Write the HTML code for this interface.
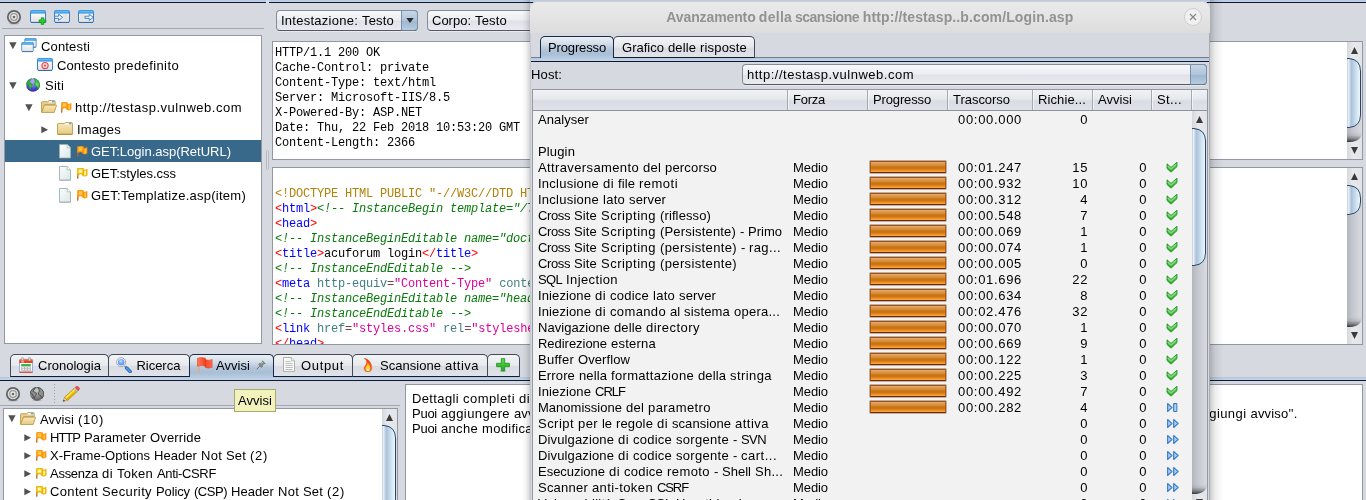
<!DOCTYPE html>
<html><head><meta charset="utf-8"><title>ZAP</title>
<style>
html,body{margin:0;padding:0;background:#d6d9df;}
body{width:1366px;height:500px;overflow:hidden;font-family:"Liberation Sans",sans-serif;}
#root{will-change:transform;position:relative;width:1366px;height:500px;overflow:hidden;background:#d6d9df;}
#root div,#root span,#root svg{position:absolute;box-sizing:border-box;}
#root svg{overflow:visible;}
.mono{font-family:"Liberation Mono",monospace;}

</style></head><body>
<svg width="0" height="0" style="position:absolute"><defs>
<linearGradient id="g-check" x1="0" y1="0" x2="0" y2="1"><stop offset="0" stop-color="#63cf5c"/><stop offset="1" stop-color="#2aa02a"/></linearGradient>
<symbol id="i-check" viewBox="0 0 12 11"><path d="M1 1.8L5 5.4L11 0.2V4.6L5 10.2L1 6.6Z" fill="#fff" stroke="#fff" stroke-width="1.6" stroke-linejoin="round" opacity=".8"/><path d="M1 1.8L5 5.4L11 0.2V4.6L5 10.2L1 6.6Z" fill="url(#g-check)" stroke="#23922a" stroke-width=".9" stroke-linejoin="round"/><path d="M2 4.2L5 7.0L10 2.6" fill="none" stroke="#8fe88a" stroke-width="1.3" opacity=".8"/></symbol>
<linearGradient id="g-blue" x1="0" y1="0" x2="1" y2="0"><stop offset="0" stop-color="#8fc0ee"/><stop offset="1" stop-color="#c6e0f8"/></linearGradient>
<symbol id="i-pp" viewBox="0 0 11 9"><path d="M0.6 0.5L5.0 4.5L0.6 8.5Z" fill="url(#g-blue)" stroke="#3b7cc6" stroke-width="1.05" stroke-linejoin="round"/><rect x="6.6" y="0.6" width="3.2" height="7.8" rx=".4" fill="url(#g-blue)" stroke="#3b7cc6" stroke-width="1.05"/></symbol>
<symbol id="i-ff" viewBox="0 0 12 9"><path d="M0.6 0.5L5.0 4.5L0.6 8.5Z" fill="url(#g-blue)" stroke="#3b7cc6" stroke-width="1.05" stroke-linejoin="round"/><path d="M6.6 0.5L11.2 4.5L6.6 8.5Z" fill="url(#g-blue)" stroke="#3b7cc6" stroke-width="1.05" stroke-linejoin="round"/></symbol>

<!-- gray target 16x16 (drawn 14 dia centred at 8,8) -->
<radialGradient id="g-tgt" cx=".5" cy=".4" r=".6"><stop offset="0" stop-color="#f4f4f4"/><stop offset="1" stop-color="#cfcfcf"/></radialGradient>
<symbol id="i-target" viewBox="0 0 16 16"><ellipse cx="8" cy="14.6" rx="5" ry="1" fill="rgba(0,0,0,.18)"/><circle cx="8" cy="8" r="6.2" fill="url(#g-tgt)" stroke="#626262" stroke-width="1.7"/><circle cx="8" cy="8" r="3.3" fill="none" stroke="#9a9a9a" stroke-width="1.3"/><circle cx="8" cy="8" r="1.3" fill="#6a6a6a"/></symbol>

<!-- window base 16x14 -->
<linearGradient id="g-wtop" x1="0" y1="0" x2="0" y2="1"><stop offset="0" stop-color="#6fd0fc"/><stop offset="1" stop-color="#3a9de9"/></linearGradient>
<linearGradient id="g-wbody" x1="0" y1="0" x2="0" y2="1"><stop offset="0" stop-color="#ffffff"/><stop offset="1" stop-color="#e2e2e2"/></linearGradient>
<symbol id="i-win" viewBox="0 0 16 14"><rect x=".5" y=".5" width="15" height="12" rx="1.4" fill="url(#g-wbody)" stroke="#3a7cc2"/><path d="M.5 3.2V1.9Q.5 .5 1.9 .5H14.1Q15.5 .5 15.5 1.9V3.2Z" fill="url(#g-wtop)" stroke="#3b8fdc" stroke-width=".6"/><path d="M1 12.4H15" stroke="#2f69ad" stroke-width=".9"/></symbol>
<symbol id="i-winadd" viewBox="0 0 17 16"><use href="#i-win" x="0" y="0" width="16" height="14"/><path d="M11.3 7.8H13.7V9.9H15.8V12.3H13.7V14.4H11.3V12.3H9.2V9.9H11.3Z" fill="#2fd02f" stroke="#0f8f1a" stroke-width=".8" stroke-linejoin="round"/></symbol>
<symbol id="i-winin" viewBox="0 0 16 14"><use href="#i-win" width="16" height="14"/><rect x="9" y="4" width="5" height="7.5" fill="#e4e4e4"/><path d="M0.6 6.2H4.6V4.2L8.6 7.3L4.6 10.4V8.4H0.6Z" fill="#e9f4fd" stroke="#3a7cc2" stroke-width=".9" stroke-linejoin="round"/></symbol>
<symbol id="i-winout" viewBox="0 0 16 14"><use href="#i-win" width="16" height="14"/><rect x="2" y="4" width="5" height="7.5" fill="#e4e4e4"/><path d="M7 6.2H11.2V4.2L15.4 7.3L11.2 10.4V8.4H7Z" fill="#e9f4fd" stroke="#3a7cc2" stroke-width=".9" stroke-linejoin="round"/></symbol>
<symbol id="i-ctxs" viewBox="0 0 16 15"><use href="#i-win" x="3" y="0" width="13" height="10.5"/><use href="#i-win" x="0" y="4" width="13" height="10.8"/></symbol>
<symbol id="i-ctx" viewBox="0 0 16 14"><use href="#i-win" width="16" height="14"/><circle cx="8" cy="7.6" r="3.1" fill="#fde3e3" stroke="#e8474a" stroke-width="1.2"/><circle cx="8" cy="7.6" r="1.1" fill="#e8474a"/></symbol>

<!-- globe -->
<radialGradient id="g-globe" cx=".48" cy=".22" r=".8"><stop offset="0" stop-color="#b3aef8"/><stop offset=".35" stop-color="#8f8af0"/><stop offset=".7" stop-color="#4a46cc"/><stop offset="1" stop-color="#2d2aa6"/></radialGradient>
<symbol id="i-globe" viewBox="0 0 14 14"><circle cx="7" cy="7" r="6.8" fill="url(#g-globe)"/><path d="M5.6 .5Q2.4 1.2 .8 4.2L.5 5.8L2.2 6.9L3.2 9.2L4.3 11.6L4.9 9.4L6.2 7.8L6.4 6.3L4.5 5.2L2.9 4.3Z" fill="#2fae2f" stroke="#1f8f22" stroke-width=".5" stroke-linejoin="round"/><path d="M7.7 .3Q11.4 .7 13.2 4.2Q14 7 13.2 9.2L12.1 11.3L11 8.9L8.7 7.6L8.2 5.6L9.5 4.2L8.9 2.2Z" fill="#3fbf45" stroke="#1f8f22" stroke-width=".5" stroke-linejoin="round"/><path d="M9.6 4.6L12.2 5.2L12.4 8.2L10.4 7.6Z" fill="#7be07f" opacity=".8"/><path d="M4.2 7.2L5.4 7.4L4.6 9.4Z" fill="#6fd873" opacity=".8"/></symbol>
<radialGradient id="g-globeg" cx=".48" cy=".22" r=".8"><stop offset="0" stop-color="#cdcdcd"/><stop offset=".4" stop-color="#a2a2a2"/><stop offset="1" stop-color="#5c5c5c"/></radialGradient>
<symbol id="i-globeg" viewBox="0 0 14 14"><ellipse cx="7" cy="13.7" rx="5" ry=".8" fill="rgba(0,0,0,.15)"/><circle cx="7" cy="7" r="6.5" fill="url(#g-globeg)" stroke="#5a5a5a" stroke-width=".6"/><path d="M5.6 .5Q2.4 1.2 .8 4.2L.5 5.8L2.2 6.9L3.2 9.2L4.3 11.6L4.9 9.4L6.2 7.8L6.4 6.3L4.5 5.2L2.9 4.3Z" fill="#8e8e8e" stroke="#444" stroke-width=".8" stroke-linejoin="round"/><path d="M7.7 .3Q11.4 .7 13.2 4.2Q14 7 13.2 9.2L12.1 11.3L11 8.9L8.7 7.6L8.2 5.6L9.5 4.2L8.9 2.2Z" fill="#909090" stroke="#444" stroke-width=".8" stroke-linejoin="round"/></symbol>

<!-- folders -->
<linearGradient id="g-fold" x1="0" y1="0" x2="0" y2="1"><stop offset="0" stop-color="#f7e9b8"/><stop offset="1" stop-color="#e6cb80"/></linearGradient>
<symbol id="i-folder" viewBox="0 0 16 13"><path d="M.5 12.2V2.2Q.5 1.5 1.2 1.5H7.2L8.6 .5H14.6Q15.5 .5 15.5 1.4V12.2Q15.5 12.6 15 12.6H1Q.5 12.6 .5 12.2Z" fill="url(#g-fold)" stroke="#c09c50" stroke-width=".9"/><path d="M9.2 1.0H14.8V2.6H7.6Z" fill="#fbfbfb"/><rect x="12" y="1.1" width="2.6" height="1.2" fill="#3aa5ee"/><path d="M1 12.2H15" stroke="#a98238" stroke-width=".8"/></symbol>
<symbol id="i-folderopen" viewBox="0 0 16 13"><path d="M.5 12.0V2.4Q.5 1.7 1.2 1.7H6.6L8.0 .6H13.4Q14.2 .6 14.2 1.4V4.6H3.6L.9 12.0Z" fill="#e6cf8f" stroke="#c09c50" stroke-width=".9"/><path d="M8.6 1.1H13.6V2.6H7.2Z" fill="#fbfbfb"/><rect x="11" y="1.1" width="2.4" height="1.2" fill="#3aa5ee"/><path d="M.7 12.5L3.4 5.2H15.6L13.2 12.5Z" fill="url(#g-fold)" stroke="#c09c50" stroke-width=".9" stroke-linejoin="round"/></symbol>

<!-- small flags 11x11 -->
<symbol id="i-flago" viewBox="0 0 11 11"><path d="M1.0 5.8L0.7 10.2" stroke="#b5651c" stroke-width="1.3" stroke-linecap="round"/><path d="M5.6 1.7Q7.8 3.0 10.1 1.3V7.3Q7.8 9.0 5.6 7.5Z" fill="#ff9a08" stroke="#f38f00" stroke-width=".5" stroke-linejoin="round"/><path d="M7.2 2.9Q8.2 3.0 9.1 2.6V6.9Q8.2 7.6 7.2 7.4Z" fill="#ffbf4a"/><path d="M0.3 0.7Q3.4 -0.5 6.7 0.7V6.5Q3.4 5.3 0.3 6.5Z" fill="#ff9d0a" stroke="#f38f00" stroke-width=".5" stroke-linejoin="round"/><path d="M1.7 1.5Q3.4 0.9 5.2 1.5V5.1Q3.4 4.5 1.7 5.1Z" fill="#ffc555"/></symbol>
<symbol id="i-flagy" viewBox="0 0 11 11"><path d="M1.0 5.8L0.7 10.2" stroke="#b5651c" stroke-width="1.3" stroke-linecap="round"/><path d="M5.6 1.7Q7.8 3.0 10.1 1.3V7.3Q7.8 9.0 5.6 7.5Z" fill="#f7c80a" stroke="#dba800" stroke-width=".7" stroke-linejoin="round"/><path d="M7.1 3.0Q8.2 3.1 9.0 2.7V6.8Q8.2 7.5 7.1 7.3Z" fill="#fff3a0"/><path d="M0.3 0.7Q3.4 -0.5 6.7 0.7V6.5Q3.4 5.3 0.3 6.5Z" fill="#f7c80a" stroke="#dba800" stroke-width=".7" stroke-linejoin="round"/><path d="M1.8 1.7Q3.4 1.1 5.1 1.7V4.9Q3.4 4.3 1.8 4.9Z" fill="#fff6b0"/></symbol>
<!-- big red flag 16x16 -->
<linearGradient id="g-red" x1="0" y1="0" x2="1" y2="0"><stop offset="0" stop-color="#ff7a58"/><stop offset=".5" stop-color="#f2482a"/><stop offset="1" stop-color="#ff6a48"/></linearGradient>
<symbol id="i-flagr" viewBox="0 0 16 16"><path d="M1.3 1V15.4" stroke="#d59a5c" stroke-width="1.8"/><path d="M1.0 9.5V15.4" stroke="#fff" stroke-width=".6" opacity=".7"/><path d="M.5 1.2Q4.5 -.4 8.4 1.2V2.6Q11.5 4.2 15.2 2.4V10.2Q11.5 12.0 8.4 10.4V9.2Q4.5 7.8 .5 9.2Z" fill="url(#g-red)" stroke="#e8401f" stroke-width=".5"/><path d="M8.4 2.2V9.8" stroke="#d93a1a" stroke-width=".8"/></symbol>

<!-- documents -->
<linearGradient id="g-doc" x1="0" y1="0" x2="1" y2="1"><stop offset="0" stop-color="#fbfdfd"/><stop offset="1" stop-color="#dbe7e7"/></linearGradient>
<symbol id="i-doc" viewBox="0 0 12 15"><ellipse cx="6" cy="14.4" rx="6" ry=".7" fill="rgba(0,0,0,.22)"/><path d="M.5 .5H8.2L11.5 3.8V14.0H.5Z" fill="url(#g-doc)" stroke="#9db0b0" stroke-width=".9" stroke-linejoin="round"/><path d="M8.2 .5V3.8H11.5" fill="#fff" stroke="#9db0b0" stroke-width=".7"/></symbol>
<symbol id="i-doclines" viewBox="0 0 12 15"><path d="M.5 .5H8.2L11.5 3.8V14.4H.5Z" fill="#fafafa" stroke="#a8a8a8" stroke-width=".9" stroke-linejoin="round"/><path d="M8.2 .5V3.8H11.5" fill="#eee" stroke="#a8a8a8" stroke-width=".7"/><path d="M2.4 4.5H7.4M2.4 6.5H9.6M2.4 8.5H9.6M2.4 10.5H9.6M2.4 12.5H9.6" stroke="#b5b5b5" stroke-width=".9"/></symbol>

<!-- calendar 14x16 -->
<linearGradient id="g-calr" x1="0" y1="0" x2="0" y2="1"><stop offset="0" stop-color="#f36a4c"/><stop offset="1" stop-color="#e23518"/></linearGradient>
<symbol id="i-cal" viewBox="0 0 14 16"><rect x=".5" y="2.3" width="13" height="13.2" rx="1" fill="#fff" stroke="#7eaee0" stroke-width=".9"/><path d="M.3 6.0V3.4Q.3 2.2 1.5 2.2H12.5Q13.7 2.2 13.7 3.4V6.0Z" fill="url(#g-calr)"/><rect x=".3" y="14.6" width="13.4" height="1.2" rx=".5" fill="#e23a1c"/><rect x="2.2" y="7.0" width="9.6" height="2.1" fill="#3db63c"/><rect x="2.2" y="9.3" width="9.6" height="4.6" fill="#a9b4c6"/><path d="M3.2 10.8H5.0M6.1 10.8H7.9M9.0 10.8H10.8M3.2 12.8H5.0M6.1 12.8H7.9M9.0 12.8H10.8" stroke="#fff" stroke-width="1"/><rect x="2.6" y=".3" width="1.8" height="3.6" rx=".9" fill="#d8d8d8" stroke="#8e8e8e" stroke-width=".5"/><rect x="9.6" y=".3" width="1.8" height="3.6" rx=".9" fill="#d8d8d8" stroke="#8e8e8e" stroke-width=".5"/><rect x="2.4" y="4.4" width="2.4" height=".9" fill="#fff"/></symbol>

<!-- magnifier 16x16 -->
<radialGradient id="g-lens" cx=".45" cy=".35" r=".7"><stop offset="0" stop-color="#c6defd"/><stop offset=".5" stop-color="#6ea8f8"/><stop offset="1" stop-color="#4d8df0"/></radialGradient>
<symbol id="i-mag" viewBox="0 0 16 16"><path d="M8.6 9.0L10.2 10.6" stroke="#8a8a8a" stroke-width="1.4"/><path d="M10.6 11.0L14.2 14.6" stroke="#1f5eaa" stroke-width="3.4" stroke-linecap="round"/><path d="M10.6 11.0L14.2 14.6" stroke="#4f97e2" stroke-width="2" stroke-linecap="round"/><circle cx="5.2" cy="5.2" r="4.5" fill="#fff" stroke="#9c9c9c" stroke-width=".9"/><circle cx="5.2" cy="5.2" r="3.3" fill="url(#g-lens)"/></symbol>

<!-- pin -->
<symbol id="i-pin" viewBox="0 0 10 10"><path d="M.6 9.4L4.2 5.8" stroke="#6a6a6a" stroke-width=".9"/><path d="M2.6 4.4L5.6 7.4L6.6 6.4L6.2 5.4L8.2 3.4L9.2 3.6L6.4 .8L6.6 1.8L4.6 3.8L3.6 3.4Z" fill="#8d8d8d" stroke="#5a5a5a" stroke-width=".6" stroke-linejoin="round"/><path d="M5.2 3.8L7.0 2.0" stroke="#d0d0d0" stroke-width=".8"/></symbol>

<!-- flame 12x14 -->
<linearGradient id="g-fl" x1="0" y1="0" x2="0" y2="1"><stop offset="0" stop-color="#e63a10"/><stop offset=".5" stop-color="#f4561a"/><stop offset="1" stop-color="#f86a1e"/></linearGradient>
<symbol id="i-flame" viewBox="0 0 12 14"><path d="M1.9 0.3Q6.5 0.8 8.6 5Q10.4 8.8 9.6 11.4Q8.6 13.9 6 13.9Q3 13.9 2.2 11.4Q1.6 9 3.6 7.2Q5.6 5 4.4 2.6Q3.6 1 1.9 0.3Z" fill="url(#g-fl)" stroke="#ef4a18" stroke-width=".5"/><path d="M5.7 4.6Q8.6 8.6 8.3 10.9Q7.7 13.1 6 13.1Q4.1 13.1 3.4 11Q3.0 9.2 4.8 7.6Q5.9 6.4 5.7 4.6Z" fill="#ffc21a"/><path d="M5.9 7.8Q7.6 10 7.4 11.2Q7.0 12.7 6 12.7Q4.8 12.7 4.4 11.2Q4.2 10 5.9 7.8Z" fill="#ffe14a"/><ellipse cx="6" cy="12" rx="1.5" ry=".9" fill="#fffbe6"/></symbol>

<!-- plus 14x14 -->
<linearGradient id="g-plus" x1="0" y1="0" x2="0" y2="1"><stop offset="0" stop-color="#5fdc4a"/><stop offset="1" stop-color="#1fa81f"/></linearGradient>
<symbol id="i-plus" viewBox="0 0 14 14"><ellipse cx="7" cy="13.3" rx="3.2" ry=".7" fill="rgba(0,0,0,.25)"/><path d="M5.3 .6H8.7V5.3H13.4V8.7H8.7V12.8H5.3V8.7H.6V5.3H5.3Z" fill="url(#g-plus)" stroke="#1c8f1c" stroke-width=".8" stroke-linejoin="round"/></symbol>

<!-- pencil 18x16 -->
<symbol id="i-pencil" viewBox="0 0 18 16"><path d="M1 15.5L2.48 11.17L5.44 14.43Z" fill="#f3cfa4" stroke="#9a7442" stroke-width=".4"/><path d="M1 15.5L1.7 13.5L3.0 14.9Z" fill="#2a2a2a"/><path d="M2.48 11.17L12.12 2.46L15.08 5.72L5.44 14.43Z" fill="#f6c40c" stroke="#9a7800" stroke-width=".6" stroke-linejoin="round"/><path d="M3.6 11.8L13.0 3.3" stroke="#ffe873" stroke-width="1.1"/><path d="M4.9 13.5L14.4 5.0" stroke="#dba400" stroke-width="1.0"/><path d="M12.12 2.46L13.23 1.46L16.19 4.72L15.08 5.72Z" fill="#d8d8d8" stroke="#8a8a8a" stroke-width=".4"/><path d="M13.23 1.46L14.5 0.4Q15.3 -0.1 16.0 0.6L17.2 1.9Q17.8 2.7 17.1 3.5L16.19 4.72Z" fill="#ee4a4a" stroke="#b63434" stroke-width=".5"/></symbol>

<symbol id="i-dn" viewBox="0 0 8 8"><path d="M.2 .3H7.6L3.9 7.3Z" fill="#525252"/></symbol>
<symbol id="i-rt" viewBox="0 0 8 8"><path d="M.3 .2V7.2L7.1 3.7Z" fill="#525252"/></symbol>
</defs></svg>

<div id="root">
<div style="left:0px;top:0px;width:266px;height:2px;background:linear-gradient(#b3c7de,#c3d5ea);"></div>
<div style="left:0px;top:2px;width:266px;height:1px;background:#0f1830;"></div>
<div style="left:269px;top:0px;width:1097px;height:2px;background:linear-gradient(#b3c7de,#c3d5ea);"></div>
<div style="left:269px;top:2px;width:1097px;height:1px;background:#0f1830;"></div>
<div style="left:2px;top:28px;width:262px;height:1px;background:#a3a7b0;"></div>
<div style="left:4px;top:35px;width:258px;height:309px;background:#fff;border:1px solid #9297a1;"></div>
<div style="left:5px;top:140px;width:256px;height:22px;background:#39698a;"></div>
<div style="left:266px;top:150px;width:3px;height:20px;border:1px solid #b4b8c0;border-radius:2px;background:#dfe1e6;"></div>
<div style="left:272px;top:41px;width:1091px;height:119px;background:#fff;border:1px solid #9297a1;"></div>
<div style="left:272px;top:167px;width:1091px;height:178px;background:#fff;border:1px solid #9297a1;"></div>
<div style="left:0px;top:377px;width:1366px;height:3px;background:linear-gradient(#b3c7de,#c3d5ea);"></div>
<div style="left:0px;top:380px;width:1366px;height:1px;background:#0f1830;"></div>
<div style="left:0px;top:405px;width:400px;height:1px;background:#a3a7b0;"></div>
<div style="left:3px;top:408px;width:395px;height:100px;background:#fff;border:1px solid #9297a1;"></div>
<div style="left:405px;top:384px;width:958px;height:130px;background:#fff;border:1px solid #9297a1;"></div>
<span style="left:41.00px;letter-spacing:0.164px;top:38.50px;font-size:13px;color:#000;line-height:16px;white-space:pre;">Contesti</span>
<span style="left:57.00px;letter-spacing:0.121px;top:57.50px;font-size:13px;color:#000;line-height:16px;white-space:pre;">Contesto</span><span style="left:114.00px;letter-spacing:0.390px;top:57.50px;font-size:13px;color:#000;line-height:16px;white-space:pre;">predefinito</span>
<span style="left:45.00px;letter-spacing:0.235px;top:77.50px;font-size:13px;color:#000;line-height:16px;white-space:pre;">Siti</span>
<span style="left:75.00px;letter-spacing:0.503px;top:99.50px;font-size:13px;color:#000;line-height:16px;white-space:pre;">http://testasp.vulnweb.com</span>
<span style="left:77.00px;letter-spacing:0.228px;top:121.50px;font-size:13px;color:#000;line-height:16px;white-space:pre;">Images</span>
<span style="left:91.00px;letter-spacing:-0.008px;top:143.50px;font-size:13px;color:#fff;line-height:16px;white-space:pre;">GET:Login.asp(RetURL)</span>
<span style="left:91.00px;letter-spacing:-0.017px;top:165.50px;font-size:13px;color:#000;line-height:16px;white-space:pre;">GET:styles.css</span>
<span style="left:91.00px;letter-spacing:0.257px;top:187.50px;font-size:13px;color:#000;line-height:16px;white-space:pre;">GET:Templatize.asp(item)</span>
<div style="left:276px;top:10px;width:142px;height:21px;border:1px solid #868b95;border-bottom-color:#535862;border-radius:4px;background:linear-gradient(#f7f8fa 0%,#eceef2 45%,#dfe2e8 55%,#e9ebf0 100%);box-shadow:0 1px 0 rgba(255,255,255,.45);"></div>
<div style="left:401px;top:10px;width:17px;height:21px;border:1px solid #7d8fa8;border-bottom-color:#66788f;border-radius:0 4px 4px 0;background:linear-gradient(#c9d7e7 0%,#afc3da 50%,#9fb7d2 55%,#b9cbdf 100%);"></div>
<svg style="left:406px;top:18px" width="8" height="5" viewBox="0 0 8 5"><path d="M.3 0H7.7L4 5Z" fill="#2a2a2a"/></svg>
<span style="left:281.00px;letter-spacing:0.253px;top:12.50px;font-size:13px;color:#000;line-height:16px;white-space:pre;">Intestazione:</span><span style="left:362.00px;letter-spacing:0.186px;top:12.50px;font-size:13px;color:#000;line-height:16px;white-space:pre;">Testo</span>
<div style="left:427px;top:10px;width:160px;height:21px;border:1px solid #868b95;border-bottom-color:#535862;border-radius:4px;background:linear-gradient(#f7f8fa 0%,#eceef2 45%,#dfe2e8 55%,#e9ebf0 100%);box-shadow:0 1px 0 rgba(255,255,255,.45);"></div>
<span style="left:432.00px;letter-spacing:-0.003px;top:12.50px;font-size:13px;color:#000;line-height:16px;white-space:pre;">Corpo:</span><span style="left:475.00px;letter-spacing:0.186px;top:12.50px;font-size:13px;color:#000;line-height:16px;white-space:pre;">Testo</span>
<div class="mono" style="left:275px;top:46.0px;font-size:12px;letter-spacing:-0.2px;line-height:15px;white-space:pre;"><span style="position:static;color:#000;">HTTP/1.1 200 OK</span></div>
<div class="mono" style="left:275px;top:61.0px;font-size:12px;letter-spacing:-0.2px;line-height:15px;white-space:pre;"><span style="position:static;color:#000;">Cache-Control: private</span></div>
<div class="mono" style="left:275px;top:76.0px;font-size:12px;letter-spacing:-0.2px;line-height:15px;white-space:pre;"><span style="position:static;color:#000;">Content-Type: text/html</span></div>
<div class="mono" style="left:275px;top:91.0px;font-size:12px;letter-spacing:-0.2px;line-height:15px;white-space:pre;"><span style="position:static;color:#000;">Server: Microsoft-IIS/8.5</span></div>
<div class="mono" style="left:275px;top:106.0px;font-size:12px;letter-spacing:-0.2px;line-height:15px;white-space:pre;"><span style="position:static;color:#000;">X-Powered-By: ASP.NET</span></div>
<div class="mono" style="left:275px;top:121.0px;font-size:12px;letter-spacing:-0.2px;line-height:15px;white-space:pre;"><span style="position:static;color:#000;">Date: Thu, 22 Feb 2018 10:53:20 GMT</span></div>
<div class="mono" style="left:275px;top:136.0px;font-size:12px;letter-spacing:-0.2px;line-height:15px;white-space:pre;"><span style="position:static;color:#000;">Content-Length: 2366</span></div>
<div style="left:273px;top:168px;width:1073px;height:176px;overflow:hidden;">
<div class="mono" style="left:2px;top:19.0px;font-size:12px;letter-spacing:-0.2px;line-height:15px;white-space:pre;"><span style="position:static;color:#b08208;">&lt;!DOCTYPE HTML PUBLIC &quot;-//W3C//DTD HTML 4.01 Transitional//EN&quot;&gt;</span></div>
<div class="mono" style="left:2px;top:34.0px;font-size:12px;letter-spacing:-0.2px;line-height:15px;white-space:pre;"><span style="position:static;color:#f00;">&lt;</span><span style="position:static;color:#00f;">html</span><span style="position:static;color:#f00;">&gt;</span><span style="position:static;color:#087a0c;font-style:italic;">&lt;!-- InstanceBegin template=&quot;/Templates/MainTemplate.dwt.asp&quot; --&gt;</span></div>
<div class="mono" style="left:2px;top:49.0px;font-size:12px;letter-spacing:-0.2px;line-height:15px;white-space:pre;"><span style="position:static;color:#f00;">&lt;</span><span style="position:static;color:#00f;">head</span><span style="position:static;color:#f00;">&gt;</span></div>
<div class="mono" style="left:2px;top:64.0px;font-size:12px;letter-spacing:-0.2px;line-height:15px;white-space:pre;"><span style="position:static;color:#087a0c;font-style:italic;">&lt;!-- InstanceBeginEditable name=&quot;doctitle&quot; --&gt;</span></div>
<div class="mono" style="left:2px;top:79.0px;font-size:12px;letter-spacing:-0.2px;line-height:15px;white-space:pre;"><span style="position:static;color:#f00;">&lt;</span><span style="position:static;color:#00f;">title</span><span style="position:static;color:#f00;">&gt;</span><span style="position:static;color:#000;">acuforum login</span><span style="position:static;color:#f00;">&lt;/</span><span style="position:static;color:#00f;">title</span><span style="position:static;color:#f00;">&gt;</span></div>
<div class="mono" style="left:2px;top:94.0px;font-size:12px;letter-spacing:-0.2px;line-height:15px;white-space:pre;"><span style="position:static;color:#087a0c;font-style:italic;">&lt;!-- InstanceEndEditable --&gt;</span></div>
<div class="mono" style="left:2px;top:109.0px;font-size:12px;letter-spacing:-0.2px;line-height:15px;white-space:pre;"><span style="position:static;color:#f00;">&lt;</span><span style="position:static;color:#00f;">meta</span><span style="position:static;color:#000;"> </span><span style="position:static;color:#3f7f7f;">http-equiv</span><span style="position:static;color:#804040;">=</span><span style="position:static;color:#dc009c;">&quot;Content-Type&quot;</span><span style="position:static;color:#000;"> </span><span style="position:static;color:#3f7f7f;">content</span><span style="position:static;color:#804040;">=</span><span style="position:static;color:#dc009c;">&quot;text/html; charset=iso-8859-1&quot;</span><span style="position:static;color:#f00;">&gt;</span></div>
<div class="mono" style="left:2px;top:124.0px;font-size:12px;letter-spacing:-0.2px;line-height:15px;white-space:pre;"><span style="position:static;color:#087a0c;font-style:italic;">&lt;!-- InstanceBeginEditable name=&quot;head&quot; --&gt;</span></div>
<div class="mono" style="left:2px;top:139.0px;font-size:12px;letter-spacing:-0.2px;line-height:15px;white-space:pre;"><span style="position:static;color:#087a0c;font-style:italic;">&lt;!-- InstanceEndEditable --&gt;</span></div>
<div class="mono" style="left:2px;top:154.0px;font-size:12px;letter-spacing:-0.2px;line-height:15px;white-space:pre;"><span style="position:static;color:#f00;">&lt;</span><span style="position:static;color:#00f;">link</span><span style="position:static;color:#000;"> </span><span style="position:static;color:#3f7f7f;">href</span><span style="position:static;color:#804040;">=</span><span style="position:static;color:#dc009c;">&quot;styles.css&quot;</span><span style="position:static;color:#000;"> </span><span style="position:static;color:#3f7f7f;">rel</span><span style="position:static;color:#804040;">=</span><span style="position:static;color:#dc009c;">&quot;stylesheet&quot;</span><span style="position:static;color:#000;"> </span><span style="position:static;color:#3f7f7f;">type</span><span style="position:static;color:#804040;">=</span><span style="position:static;color:#dc009c;">&quot;text/css&quot;</span><span style="position:static;color:#f00;">&gt;</span></div>
<div class="mono" style="left:2px;top:169.0px;font-size:12px;letter-spacing:-0.2px;line-height:15px;white-space:pre;"><span style="position:static;color:#f00;">&lt;/</span><span style="position:static;color:#00f;">head</span><span style="position:static;color:#f00;">&gt;</span></div>
</div>
<div style="left:10px;top:354px;width:99px;height:23px;border:1px solid #434957;border-bottom:1px solid #151b2d;border-radius:5px 5px 0 0;background:linear-gradient(#f3f4f6 0%,#e6e8ec 50%,#d9dce3 55%,#e0e3e8 100%);"></div>
<span style="left:38.00px;letter-spacing:0.013px;top:357.50px;font-size:13px;color:#000;line-height:16px;white-space:pre;">Cronologia</span>
<div style="left:108px;top:354px;width:82px;height:23px;border:1px solid #434957;border-bottom:1px solid #151b2d;border-radius:5px 5px 0 0;background:linear-gradient(#f3f4f6 0%,#e6e8ec 50%,#d9dce3 55%,#e0e3e8 100%);"></div>
<span style="left:136.40px;letter-spacing:-0.009px;top:357.50px;font-size:13px;color:#000;line-height:16px;white-space:pre;">Ricerca</span>
<div style="left:273px;top:354px;width:80px;height:23px;border:1px solid #434957;border-bottom:1px solid #151b2d;border-radius:5px 5px 0 0;background:linear-gradient(#f3f4f6 0%,#e6e8ec 50%,#d9dce3 55%,#e0e3e8 100%);"></div>
<span style="left:301.00px;letter-spacing:0.662px;top:357.50px;font-size:13px;color:#000;line-height:16px;white-space:pre;">Output</span>
<div style="left:352px;top:354px;width:136px;height:23px;border:1px solid #434957;border-bottom:1px solid #151b2d;border-radius:5px 5px 0 0;background:linear-gradient(#f3f4f6 0%,#e6e8ec 50%,#d9dce3 55%,#e0e3e8 100%);"></div>
<span style="left:380.00px;letter-spacing:0.032px;top:357.50px;font-size:13px;color:#000;line-height:16px;white-space:pre;">Scansione</span><span style="left:445.00px;letter-spacing:0.488px;top:357.50px;font-size:13px;color:#000;line-height:16px;white-space:pre;">attiva</span>
<div style="left:487px;top:354px;width:33px;height:23px;border:1px solid #434957;border-bottom:1px solid #151b2d;border-radius:5px 5px 0 0;background:linear-gradient(#f3f4f6 0%,#e6e8ec 50%,#d9dce3 55%,#e0e3e8 100%);"></div>
<div style="left:189px;top:354px;width:85px;height:23px;border:1px solid #1b2a44;border-bottom:none;border-radius:5px 5px 0 0;background:linear-gradient(#e9eef4 0%,#d5dfea 30%,#b2c5da 58%,#a9bdd4 80%,#b6cae0 100%);"></div>
<div style="left:190px;top:377px;width:83px;height:2px;background:linear-gradient(#b6cae0,#bed2e8);"></div>
<span style="left:216.00px;letter-spacing:0.048px;top:357.50px;font-size:13px;color:#000;line-height:16px;white-space:pre;">Avvisi</span>
<div style="left:234px;top:389px;width:42px;height:23px;background:#f2f2bd;border:1px solid #a8a870;"></div>
<span style="left:238.00px;letter-spacing:0.048px;top:392.50px;font-size:13px;color:#000;line-height:16px;white-space:pre;">Avvisi</span>
<span style="left:40.00px;letter-spacing:0.048px;top:411.50px;font-size:13px;color:#000;line-height:16px;white-space:pre;">Avvisi</span><span style="left:78.00px;letter-spacing:0.720px;top:411.50px;font-size:13px;color:#000;line-height:16px;white-space:pre;">(10)</span>
<span style="left:50.00px;letter-spacing:-0.985px;top:429.50px;font-size:13px;color:#000;line-height:16px;white-space:pre;">HTTP</span><span style="left:84.00px;letter-spacing:0.146px;top:429.50px;font-size:13px;color:#000;line-height:16px;white-space:pre;">Parameter</span><span style="left:150.00px;letter-spacing:0.144px;top:429.50px;font-size:13px;color:#000;line-height:16px;white-space:pre;">Override</span>
<span style="left:50.00px;letter-spacing:0.021px;top:447.50px;font-size:13px;color:#000;line-height:16px;white-space:pre;">X-Frame-Options</span><span style="left:154.00px;letter-spacing:0.060px;top:447.50px;font-size:13px;color:#000;line-height:16px;white-space:pre;">Header</span><span style="left:201.00px;letter-spacing:0.257px;top:447.50px;font-size:13px;color:#000;line-height:16px;white-space:pre;">Not</span><span style="left:226.00px;letter-spacing:0.162px;top:447.50px;font-size:13px;color:#000;line-height:16px;white-space:pre;">Set</span><span style="left:250.00px;letter-spacing:0.704px;top:447.50px;font-size:13px;color:#000;line-height:16px;white-space:pre;">(2)</span>
<span style="left:50.00px;letter-spacing:-0.266px;top:465.50px;font-size:13px;color:#000;line-height:16px;white-space:pre;">Assenza</span><span style="left:102.00px;letter-spacing:0.441px;top:465.50px;font-size:13px;color:#000;line-height:16px;white-space:pre;">di</span><span style="left:117.00px;letter-spacing:0.262px;top:465.50px;font-size:13px;color:#000;line-height:16px;white-space:pre;">Token</span><span style="left:157.00px;letter-spacing:-0.346px;top:465.50px;font-size:13px;color:#000;line-height:16px;white-space:pre;">Anti-CSRF</span>
<span style="left:50.00px;letter-spacing:0.353px;top:483.50px;font-size:13px;color:#000;line-height:16px;white-space:pre;">Content</span><span style="left:102.00px;letter-spacing:0.380px;top:483.50px;font-size:13px;color:#000;line-height:16px;white-space:pre;">Security</span><span style="left:156.00px;letter-spacing:-0.113px;top:483.50px;font-size:13px;color:#000;line-height:16px;white-space:pre;">Policy</span><span style="left:194.00px;letter-spacing:-0.478px;top:483.50px;font-size:13px;color:#000;line-height:16px;white-space:pre;">(CSP)</span><span style="left:231.00px;letter-spacing:0.060px;top:483.50px;font-size:13px;color:#000;line-height:16px;white-space:pre;">Header</span><span style="left:278.00px;letter-spacing:0.257px;top:483.50px;font-size:13px;color:#000;line-height:16px;white-space:pre;">Not</span><span style="left:303.00px;letter-spacing:0.162px;top:483.50px;font-size:13px;color:#000;line-height:16px;white-space:pre;">Set</span><span style="left:327.00px;letter-spacing:0.704px;top:483.50px;font-size:13px;color:#000;line-height:16px;white-space:pre;">(2)</span>
<span style="left:412.00px;letter-spacing:0.365px;top:390.50px;font-size:13px;color:#000;line-height:16px;white-space:pre;">Dettagli</span><span style="left:463.00px;letter-spacing:0.449px;top:390.50px;font-size:13px;color:#000;line-height:16px;white-space:pre;">completi</span><span style="left:519.00px;letter-spacing:0.441px;top:390.50px;font-size:13px;color:#000;line-height:16px;white-space:pre;">di</span><span style="left:534.00px;letter-spacing:0.355px;top:390.50px;font-size:13px;color:#000;line-height:16px;white-space:pre;">ogni</span><span style="left:564.00px;letter-spacing:0.025px;top:390.50px;font-size:13px;color:#000;line-height:16px;white-space:pre;">avviso</span><span style="left:605.00px;letter-spacing:0.021px;top:390.50px;font-size:13px;color:#000;line-height:16px;white-space:pre;">selezionato</span><span style="left:675.00px;letter-spacing:0.146px;top:390.50px;font-size:13px;color:#000;line-height:16px;white-space:pre;">saranno</span><span style="left:727.00px;letter-spacing:0.471px;top:390.50px;font-size:13px;color:#000;line-height:16px;white-space:pre;">mostrati</span><span style="left:781.00px;letter-spacing:0.510px;top:390.50px;font-size:13px;color:#000;line-height:16px;white-space:pre;">qui.</span>
<span style="left:412.00px;letter-spacing:-0.255px;top:405.50px;font-size:13px;color:#000;line-height:16px;white-space:pre;">Puoi</span><span style="left:441.00px;letter-spacing:0.394px;top:405.50px;font-size:13px;color:#000;line-height:16px;white-space:pre;">aggiungere</span><span style="left:514.00px;letter-spacing:0.082px;top:405.50px;font-size:13px;color:#000;line-height:16px;white-space:pre;">avvisi</span><span style="left:551.00px;letter-spacing:0.476px;top:405.50px;font-size:13px;color:#000;line-height:16px;white-space:pre;">manualmente</span><span style="left:639.00px;letter-spacing:0.347px;top:405.50px;font-size:13px;color:#000;line-height:16px;white-space:pre;">con</span><span style="left:665.00px;letter-spacing:0.770px;top:405.50px;font-size:13px;color:#000;line-height:16px;white-space:pre;">un</span><span style="left:685.00px;letter-spacing:0.345px;top:405.50px;font-size:13px;color:#000;line-height:16px;white-space:pre;">click</span><span style="left:716.00px;letter-spacing:0.312px;top:405.50px;font-size:13px;color:#000;line-height:16px;white-space:pre;">destro</span>
<span style="left:1192.50px;letter-spacing:0.425px;top:405.50px;font-size:13px;color:#000;line-height:16px;white-space:pre;">Aggiungi</span><span style="left:1250.50px;letter-spacing:0.175px;top:405.50px;font-size:13px;color:#000;line-height:16px;white-space:pre;">avviso&#x27;&#x27;.</span>
<span style="left:412.00px;letter-spacing:-0.255px;top:420.50px;font-size:13px;color:#000;line-height:16px;white-space:pre;">Puoi</span><span style="left:441.00px;letter-spacing:0.316px;top:420.50px;font-size:13px;color:#000;line-height:16px;white-space:pre;">anche</span><span style="left:482.00px;letter-spacing:0.303px;top:420.50px;font-size:13px;color:#000;line-height:16px;white-space:pre;">modificare</span><span style="left:549.00px;letter-spacing:0.331px;top:420.50px;font-size:13px;color:#000;line-height:16px;white-space:pre;">gli</span><span style="left:567.00px;letter-spacing:0.082px;top:420.50px;font-size:13px;color:#000;line-height:16px;white-space:pre;">avvisi</span><span style="left:604.00px;letter-spacing:0.257px;top:420.50px;font-size:13px;color:#000;line-height:16px;white-space:pre;">esistenti</span><span style="left:658.00px;letter-spacing:0.347px;top:420.50px;font-size:13px;color:#000;line-height:16px;white-space:pre;">con</span><span style="left:684.00px;letter-spacing:0.770px;top:420.50px;font-size:13px;color:#000;line-height:16px;white-space:pre;">un</span><span style="left:704.00px;letter-spacing:0.327px;top:420.50px;font-size:13px;color:#000;line-height:16px;white-space:pre;">doppio</span><span style="left:749.00px;letter-spacing:0.352px;top:420.50px;font-size:13px;color:#000;line-height:16px;white-space:pre;">click.</span>
<div style="left:1347px;top:42px;width:15px;height:117px;background:linear-gradient(90deg,#b3b6be 0%,#c3c6cd 35%,#d9dbe1 100%);"></div>
<div style="left:1347px;top:42px;width:15px;height:29px;background:linear-gradient(90deg,#d6d8dd,#e8e9ec 40%,#e2e4e8);"></div>
<svg style="left:1351px;top:47px" width="7" height="7" viewBox="0 0 7 7"><path d="M3.5 0L7 7H0Z" fill="#3a3a3a"/></svg>
<svg style="left:1347px;top:132px" width="15" height="10" viewBox="0 0 15 10"><defs><linearGradient id="capt1347_42" x1="0" y1="0" x2="1" y2="0"><stop offset="0" stop-color="#b3b6be"/><stop offset=".35" stop-color="#c3c6cd"/><stop offset="1" stop-color="#d9dbe1"/></linearGradient><linearGradient id="cap1347_42" x1="0" y1="0" x2="0" y2="1"><stop offset="0" stop-color="#000" stop-opacity="0"/><stop offset=".35" stop-color="#000" stop-opacity=".08"/><stop offset=".7" stop-color="#000" stop-opacity=".35"/><stop offset="1" stop-color="#000" stop-opacity=".72"/></linearGradient></defs><rect width="15" height="10" fill="#e4e5e9"/><path d="M0 0H15Q15 9 3 10H0Z" fill="url(#capt1347_42)"/><path d="M0 0H15Q15 9 3 10H0Z" fill="url(#cap1347_42)"/></svg>
<div style="left:1347px;top:142px;width:15px;height:17px;background:linear-gradient(90deg,#d6d8dd,#e8e9ec 40%,#e2e4e8);"></div>
<svg style="left:1351px;top:147px" width="7" height="7" viewBox="0 0 7 7"><path d="M0 0H7L3.5 7Z" fill="#3a3a3a"/></svg>
<svg style="left:1347px;top:58px" width="15" height="70" viewBox="0 0 15 70"><defs><linearGradient id="th1347_42" x1="0" y1="0" x2="1" y2="0"><stop offset="0" stop-color="#b5c3d1"/><stop offset=".09" stop-color="#eef3f7"/><stop offset=".3" stop-color="#aac1da"/><stop offset=".6" stop-color="#c9dcec"/><stop offset=".92" stop-color="#e9f7fd"/><stop offset="1" stop-color="#e9f7fd"/></linearGradient></defs><path d="M0 0H2Q14 1 14 13V57Q14 69 2 70H0Z" fill="url(#th1347_42)"/><path d="M0 0.5H2Q13.5 1.5 13.5 13V57Q13.5 68.5 2 69.5H0" fill="none" stroke="#2e4766" stroke-width="1"/></svg>
<div style="left:1347px;top:168px;width:15px;height:176px;background:linear-gradient(90deg,#b3b6be 0%,#c3c6cd 35%,#d9dbe1 100%);"></div>
<div style="left:1347px;top:168px;width:15px;height:29px;background:linear-gradient(90deg,#d6d8dd,#e8e9ec 40%,#e2e4e8);"></div>
<svg style="left:1351px;top:173px" width="7" height="7" viewBox="0 0 7 7"><path d="M3.5 0L7 7H0Z" fill="#3a3a3a"/></svg>
<svg style="left:1347px;top:317px" width="15" height="10" viewBox="0 0 15 10"><defs><linearGradient id="capt1347_168" x1="0" y1="0" x2="1" y2="0"><stop offset="0" stop-color="#b3b6be"/><stop offset=".35" stop-color="#c3c6cd"/><stop offset="1" stop-color="#d9dbe1"/></linearGradient><linearGradient id="cap1347_168" x1="0" y1="0" x2="0" y2="1"><stop offset="0" stop-color="#000" stop-opacity="0"/><stop offset=".35" stop-color="#000" stop-opacity=".08"/><stop offset=".7" stop-color="#000" stop-opacity=".35"/><stop offset="1" stop-color="#000" stop-opacity=".72"/></linearGradient></defs><rect width="15" height="10" fill="#e4e5e9"/><path d="M0 0H15Q15 9 3 10H0Z" fill="url(#capt1347_168)"/><path d="M0 0H15Q15 9 3 10H0Z" fill="url(#cap1347_168)"/></svg>
<div style="left:1347px;top:327px;width:15px;height:17px;background:linear-gradient(90deg,#d6d8dd,#e8e9ec 40%,#e2e4e8);"></div>
<svg style="left:1351px;top:332px" width="7" height="7" viewBox="0 0 7 7"><path d="M0 0H7L3.5 7Z" fill="#3a3a3a"/></svg>
<svg style="left:1347px;top:185px" width="15" height="30" viewBox="0 0 15 30"><defs><linearGradient id="th1347_168" x1="0" y1="0" x2="1" y2="0"><stop offset="0" stop-color="#b5c3d1"/><stop offset=".09" stop-color="#eef3f7"/><stop offset=".3" stop-color="#aac1da"/><stop offset=".6" stop-color="#c9dcec"/><stop offset=".92" stop-color="#e9f7fd"/><stop offset="1" stop-color="#e9f7fd"/></linearGradient></defs><path d="M0 0H2Q14 1 14 13V17Q14 29 2 30H0Z" fill="url(#th1347_168)"/><path d="M0 0.5H2Q13.5 1.5 13.5 13V17Q13.5 28.5 2 29.5H0" fill="none" stroke="#2e4766" stroke-width="1"/></svg>
<div style="left:382px;top:409px;width:15px;height:110px;background:linear-gradient(90deg,#b3b6be 0%,#c3c6cd 35%,#d9dbe1 100%);"></div>
<div style="left:382px;top:409px;width:15px;height:29px;background:linear-gradient(90deg,#d6d8dd,#e8e9ec 40%,#e2e4e8);"></div>
<svg style="left:386px;top:414px" width="7" height="7" viewBox="0 0 7 7"><path d="M3.5 0L7 7H0Z" fill="#3a3a3a"/></svg>
<svg style="left:382px;top:492px" width="15" height="10" viewBox="0 0 15 10"><defs><linearGradient id="capt382_409" x1="0" y1="0" x2="1" y2="0"><stop offset="0" stop-color="#b3b6be"/><stop offset=".35" stop-color="#c3c6cd"/><stop offset="1" stop-color="#d9dbe1"/></linearGradient><linearGradient id="cap382_409" x1="0" y1="0" x2="0" y2="1"><stop offset="0" stop-color="#000" stop-opacity="0"/><stop offset=".35" stop-color="#000" stop-opacity=".08"/><stop offset=".7" stop-color="#000" stop-opacity=".35"/><stop offset="1" stop-color="#000" stop-opacity=".72"/></linearGradient></defs><rect width="15" height="10" fill="#e4e5e9"/><path d="M0 0H15Q15 9 3 10H0Z" fill="url(#capt382_409)"/><path d="M0 0H15Q15 9 3 10H0Z" fill="url(#cap382_409)"/></svg>
<div style="left:382px;top:502px;width:15px;height:17px;background:linear-gradient(90deg,#d6d8dd,#e8e9ec 40%,#e2e4e8);"></div>
<svg style="left:386px;top:507px" width="7" height="7" viewBox="0 0 7 7"><path d="M0 0H7L3.5 7Z" fill="#3a3a3a"/></svg>
<svg style="left:382px;top:425px" width="15" height="120" viewBox="0 0 15 120"><defs><linearGradient id="th382_409" x1="0" y1="0" x2="1" y2="0"><stop offset="0" stop-color="#b5c3d1"/><stop offset=".09" stop-color="#eef3f7"/><stop offset=".3" stop-color="#aac1da"/><stop offset=".6" stop-color="#c9dcec"/><stop offset=".92" stop-color="#e9f7fd"/><stop offset="1" stop-color="#e9f7fd"/></linearGradient></defs><path d="M0 0H2Q14 1 14 13V107Q14 119 2 120H0Z" fill="url(#th382_409)"/><path d="M0 0.5H2Q13.5 1.5 13.5 13V107Q13.5 118.5 2 119.5H0" fill="none" stroke="#2e4766" stroke-width="1"/></svg>
<div style="left:1210px;top:0px;width:13px;height:500px;background:linear-gradient(90deg,rgba(0,0,0,.2),rgba(0,0,0,.07) 40%,rgba(0,0,0,0));"></div>
<div style="left:522px;top:0px;width:8px;height:500px;background:linear-gradient(270deg,rgba(0,0,0,.17),rgba(0,0,0,.05) 50%,rgba(0,0,0,0));"></div>
<div style="left:530px;top:1px;width:680px;height:520px;background:#d6d9df;border-radius:8px 8px 0 0;border-left:1px solid #c6c8ce;border-right:1px solid #a9abb0;"></div>
<div style="left:530px;top:1px;width:680px;height:32px;background:linear-gradient(#eaeaea,#e4e4e4 50%,#dcdcdc);border-radius:8px 8px 0 0;border-top:1px solid #d0d0d0;"></div>
<span style="left:666.30px;letter-spacing:-0.109px;top:9.15px;font-size:14px;color:#929292;line-height:16px;white-space:pre;font-weight:bold;">Avanzamento</span>
<span style="left:758.80px;letter-spacing:0.299px;top:9.15px;font-size:14px;color:#929292;line-height:16px;white-space:pre;font-weight:bold;">della</span>
<span style="left:795.00px;letter-spacing:-0.497px;top:9.15px;font-size:14px;color:#929292;line-height:16px;white-space:pre;font-weight:bold;">scansione</span>
<span style="left:862.80px;letter-spacing:0.119px;top:9.15px;font-size:14px;color:#929292;line-height:16px;white-space:pre;font-weight:bold;">http://testasp..b.com/Login.asp</span>
<div style="left:1184px;top:8px;width:18px;height:18px;border-radius:9px;background:#f0f0f0;border:1px solid #cfcfcf;"></div>
<svg style="left:1189px;top:13px" width="8" height="8" viewBox="0 0 8 8"><path d="M1 1L7 7M7 1L1 7" stroke="#858585" stroke-width="1.1" fill="none"/></svg>
<div style="left:531px;top:58px;width:678px;height:3px;background:linear-gradient(#b3c7de,#c3d5ea);"></div>
<div style="left:531px;top:57px;width:678px;height:1px;background:#777e8b;"></div>
<div style="left:531px;top:61px;width:678px;height:1px;background:#0f1830;"></div>
<div style="left:613px;top:36px;width:142px;height:22px;border:1px solid #434957;border-bottom:1px solid #151b2d;border-radius:5px 5px 0 0;background:linear-gradient(#f3f4f6 0%,#e6e8ec 50%,#d9dce3 55%,#e0e3e8 100%);"></div>
<span style="left:622.00px;letter-spacing:0.014px;top:39.50px;font-size:13px;color:#000;line-height:16px;white-space:pre;">Grafico</span><span style="left:668.00px;letter-spacing:0.107px;top:39.50px;font-size:13px;color:#000;line-height:16px;white-space:pre;">delle</span><span style="left:700.00px;letter-spacing:0.185px;top:39.50px;font-size:13px;color:#000;line-height:16px;white-space:pre;">risposte</span>
<div style="left:540px;top:36px;width:74px;height:22px;border:1px solid #1b2a44;border-bottom:none;border-radius:5px 5px 0 0;background:linear-gradient(#e9eef4 0%,#d5dfea 30%,#b2c5da 58%,#a9bdd4 80%,#b6cae0 100%);"></div>
<div style="left:541px;top:58px;width:72px;height:2px;background:linear-gradient(#b6cae0,#bed2e8);"></div>
<span style="left:548.00px;letter-spacing:-0.139px;top:39.50px;font-size:13px;color:#000;line-height:16px;white-space:pre;">Progresso</span>
<span style="left:531.00px;letter-spacing:0.132px;top:66.50px;font-size:13px;color:#000;line-height:16px;white-space:pre;">Host:</span>
<div style="left:742px;top:64px;width:465px;height:21px;border:1px solid #868b95;border-bottom-color:#535862;border-radius:4px;background:linear-gradient(#f7f8fa 0%,#eceef2 45%,#dfe2e8 55%,#e9ebf0 100%);box-shadow:0 1px 0 rgba(255,255,255,.45);"></div>
<div style="left:1190px;top:64px;width:17px;height:21px;border:1px solid #7d8fa8;border-bottom-color:#66788f;border-radius:0 4px 4px 0;background:linear-gradient(#c9d7e7 0%,#afc3da 50%,#9fb7d2 55%,#b9cbdf 100%);"></div>
<span style="left:747.00px;letter-spacing:0.503px;top:66.50px;font-size:13px;color:#000;line-height:16px;white-space:pre;">http://testasp.vulnweb.com</span>
<div style="left:532px;top:89px;width:676px;height:420px;background:#f2f2f2;border:1px solid #9297a1;"></div>
<div style="left:533px;top:90px;width:674px;height:21px;background:linear-gradient(#f1f2f5 0%,#e6e8ec 45%,#d9dce3 55%,#dfe2e8 100%);border-bottom:1px solid #8e939d;"></div>
<div style="left:787px;top:90px;width:1px;height:20px;background:#a5a9b3;"></div>
<div style="left:788px;top:90px;width:1px;height:19px;background:rgba(255,255,255,.6);"></div>
<div style="left:867px;top:90px;width:1px;height:20px;background:#a5a9b3;"></div>
<div style="left:868px;top:90px;width:1px;height:19px;background:rgba(255,255,255,.6);"></div>
<div style="left:947px;top:90px;width:1px;height:20px;background:#a5a9b3;"></div>
<div style="left:948px;top:90px;width:1px;height:19px;background:rgba(255,255,255,.6);"></div>
<div style="left:1032px;top:90px;width:1px;height:20px;background:#a5a9b3;"></div>
<div style="left:1033px;top:90px;width:1px;height:19px;background:rgba(255,255,255,.6);"></div>
<div style="left:1092px;top:90px;width:1px;height:20px;background:#a5a9b3;"></div>
<div style="left:1093px;top:90px;width:1px;height:19px;background:rgba(255,255,255,.6);"></div>
<div style="left:1151px;top:90px;width:1px;height:20px;background:#a5a9b3;"></div>
<div style="left:1152px;top:90px;width:1px;height:19px;background:rgba(255,255,255,.6);"></div>
<div style="left:1191px;top:90px;width:1px;height:20px;background:#a5a9b3;"></div>
<div style="left:1192px;top:90px;width:1px;height:19px;background:rgba(255,255,255,.6);"></div>
<span style="left:793.00px;letter-spacing:-0.246px;top:91.50px;font-size:13px;color:#000;line-height:16px;white-space:pre;">Forza</span>
<span style="left:873.00px;letter-spacing:-0.139px;top:91.50px;font-size:13px;color:#000;line-height:16px;white-space:pre;">Progresso</span>
<span style="left:953.00px;letter-spacing:-0.034px;top:91.50px;font-size:13px;color:#000;line-height:16px;white-space:pre;">Trascorso</span>
<span style="left:1038.00px;letter-spacing:0.116px;top:91.50px;font-size:13px;color:#000;line-height:16px;white-space:pre;">Richie...</span>
<span style="left:1098.00px;letter-spacing:0.048px;top:91.50px;font-size:13px;color:#000;line-height:16px;white-space:pre;">Avvisi</span>
<span style="left:1157.00px;letter-spacing:0.376px;top:91.50px;font-size:13px;color:#000;line-height:16px;white-space:pre;">St...</span>
<span style="left:538.00px;letter-spacing:0.053px;top:111.50px;font-size:13px;color:#000;line-height:16px;white-space:pre;">Analyser</span>
<span style="left:958.00px;letter-spacing:0.685px;top:111.50px;font-size:13px;color:#000;line-height:16px;white-space:pre;">00:00.000</span>
<span style="left:1080.30px;letter-spacing:0.770px;top:111.50px;font-size:13px;color:#000;line-height:16px;white-space:pre;">0</span>
<span style="left:538.00px;letter-spacing:0.144px;top:143.50px;font-size:13px;color:#000;line-height:16px;white-space:pre;">Plugin</span>
<span style="left:538.00px;letter-spacing:0.375px;top:159.50px;font-size:13px;color:#000;line-height:16px;white-space:pre;">Attraversamento</span><span style="left:643.00px;letter-spacing:0.217px;top:159.50px;font-size:13px;color:#000;line-height:16px;white-space:pre;">del</span><span style="left:665.00px;letter-spacing:0.178px;top:159.50px;font-size:13px;color:#000;line-height:16px;white-space:pre;">percorso</span>
<span style="left:793.00px;letter-spacing:-0.081px;top:159.50px;font-size:13px;color:#000;line-height:16px;white-space:pre;">Medio</span>
<div style="left:869px;top:160px;width:78px;height:14px;border:1px solid rgba(125,110,95,.5);border-radius:1.5px;"></div>
<div style="left:870px;top:161px;width:76px;height:12px;border:1px solid #b25c0c;border-top-color:#a4500a;border-bottom-color:#74260a;background:linear-gradient(#e3ad70 0%,#d9944a 25%,#cc7714 50%,#c96d0c 60%,#e48a24 80%,#ffa940 100%);"></div>
<span style="left:958.00px;letter-spacing:0.685px;top:159.50px;font-size:13px;color:#000;line-height:16px;white-space:pre;">00:01.247</span>
<span style="left:1072.30px;letter-spacing:0.770px;top:159.50px;font-size:13px;color:#000;line-height:16px;white-space:pre;">15</span>
<span style="left:1139.30px;letter-spacing:0.770px;top:159.50px;font-size:13px;color:#000;line-height:16px;white-space:pre;">0</span>
<svg style="left:1166px;top:162px" width="12" height="11"><use href="#i-check"/></svg>
<span style="left:538.00px;letter-spacing:0.246px;top:175.50px;font-size:13px;color:#000;line-height:16px;white-space:pre;">Inclusione</span><span style="left:603.00px;letter-spacing:0.441px;top:175.50px;font-size:13px;color:#000;line-height:16px;white-space:pre;">di</span><span style="left:618.00px;letter-spacing:0.095px;top:175.50px;font-size:13px;color:#000;line-height:16px;white-space:pre;">file</span><span style="left:639.00px;letter-spacing:0.480px;top:175.50px;font-size:13px;color:#000;line-height:16px;white-space:pre;">remoti</span>
<span style="left:793.00px;letter-spacing:-0.081px;top:175.50px;font-size:13px;color:#000;line-height:16px;white-space:pre;">Medio</span>
<div style="left:869px;top:176px;width:78px;height:14px;border:1px solid rgba(125,110,95,.5);border-radius:1.5px;"></div>
<div style="left:870px;top:177px;width:76px;height:12px;border:1px solid #b25c0c;border-top-color:#a4500a;border-bottom-color:#74260a;background:linear-gradient(#e3ad70 0%,#d9944a 25%,#cc7714 50%,#c96d0c 60%,#e48a24 80%,#ffa940 100%);"></div>
<span style="left:958.00px;letter-spacing:0.685px;top:175.50px;font-size:13px;color:#000;line-height:16px;white-space:pre;">00:00.932</span>
<span style="left:1072.30px;letter-spacing:0.770px;top:175.50px;font-size:13px;color:#000;line-height:16px;white-space:pre;">10</span>
<span style="left:1139.30px;letter-spacing:0.770px;top:175.50px;font-size:13px;color:#000;line-height:16px;white-space:pre;">0</span>
<svg style="left:1166px;top:178px" width="12" height="11"><use href="#i-check"/></svg>
<span style="left:538.00px;letter-spacing:0.246px;top:191.50px;font-size:13px;color:#000;line-height:16px;white-space:pre;">Inclusione</span><span style="left:603.00px;letter-spacing:0.260px;top:191.50px;font-size:13px;color:#000;line-height:16px;white-space:pre;">lato</span><span style="left:629.00px;letter-spacing:0.147px;top:191.50px;font-size:13px;color:#000;line-height:16px;white-space:pre;">server</span>
<span style="left:793.00px;letter-spacing:-0.081px;top:191.50px;font-size:13px;color:#000;line-height:16px;white-space:pre;">Medio</span>
<div style="left:869px;top:192px;width:78px;height:14px;border:1px solid rgba(125,110,95,.5);border-radius:1.5px;"></div>
<div style="left:870px;top:193px;width:76px;height:12px;border:1px solid #b25c0c;border-top-color:#a4500a;border-bottom-color:#74260a;background:linear-gradient(#e3ad70 0%,#d9944a 25%,#cc7714 50%,#c96d0c 60%,#e48a24 80%,#ffa940 100%);"></div>
<span style="left:958.00px;letter-spacing:0.685px;top:191.50px;font-size:13px;color:#000;line-height:16px;white-space:pre;">00:00.312</span>
<span style="left:1080.30px;letter-spacing:0.770px;top:191.50px;font-size:13px;color:#000;line-height:16px;white-space:pre;">4</span>
<span style="left:1139.30px;letter-spacing:0.770px;top:191.50px;font-size:13px;color:#000;line-height:16px;white-space:pre;">0</span>
<svg style="left:1166px;top:194px" width="12" height="11"><use href="#i-check"/></svg>
<span style="left:538.00px;letter-spacing:-0.389px;top:207.50px;font-size:13px;color:#000;line-height:16px;white-space:pre;">Cross</span><span style="left:574.00px;letter-spacing:0.150px;top:207.50px;font-size:13px;color:#000;line-height:16px;white-space:pre;">Site</span><span style="left:601.00px;letter-spacing:0.491px;top:207.50px;font-size:13px;color:#000;line-height:16px;white-space:pre;">Scripting</span><span style="left:660.00px;letter-spacing:0.116px;top:207.50px;font-size:13px;color:#000;line-height:16px;white-space:pre;">(riflesso)</span>
<span style="left:793.00px;letter-spacing:-0.081px;top:207.50px;font-size:13px;color:#000;line-height:16px;white-space:pre;">Medio</span>
<div style="left:869px;top:208px;width:78px;height:14px;border:1px solid rgba(125,110,95,.5);border-radius:1.5px;"></div>
<div style="left:870px;top:209px;width:76px;height:12px;border:1px solid #b25c0c;border-top-color:#a4500a;border-bottom-color:#74260a;background:linear-gradient(#e3ad70 0%,#d9944a 25%,#cc7714 50%,#c96d0c 60%,#e48a24 80%,#ffa940 100%);"></div>
<span style="left:958.00px;letter-spacing:0.685px;top:207.50px;font-size:13px;color:#000;line-height:16px;white-space:pre;">00:00.548</span>
<span style="left:1080.30px;letter-spacing:0.770px;top:207.50px;font-size:13px;color:#000;line-height:16px;white-space:pre;">7</span>
<span style="left:1139.30px;letter-spacing:0.770px;top:207.50px;font-size:13px;color:#000;line-height:16px;white-space:pre;">0</span>
<svg style="left:1166px;top:210px" width="12" height="11"><use href="#i-check"/></svg>
<span style="left:538.00px;letter-spacing:-0.389px;top:223.50px;font-size:13px;color:#000;line-height:16px;white-space:pre;">Cross</span><span style="left:574.00px;letter-spacing:0.150px;top:223.50px;font-size:13px;color:#000;line-height:16px;white-space:pre;">Site</span><span style="left:601.00px;letter-spacing:0.491px;top:223.50px;font-size:13px;color:#000;line-height:16px;white-space:pre;">Scripting</span><span style="left:660.00px;letter-spacing:0.178px;top:223.50px;font-size:13px;color:#000;line-height:16px;white-space:pre;">(Persistente)</span><span style="left:740.00px;letter-spacing:-0.329px;top:223.50px;font-size:13px;color:#000;line-height:16px;white-space:pre;">-</span><span style="left:748.00px;letter-spacing:0.011px;top:223.50px;font-size:13px;color:#000;line-height:16px;white-space:pre;">Primo</span>
<span style="left:793.00px;letter-spacing:-0.081px;top:223.50px;font-size:13px;color:#000;line-height:16px;white-space:pre;">Medio</span>
<div style="left:869px;top:224px;width:78px;height:14px;border:1px solid rgba(125,110,95,.5);border-radius:1.5px;"></div>
<div style="left:870px;top:225px;width:76px;height:12px;border:1px solid #b25c0c;border-top-color:#a4500a;border-bottom-color:#74260a;background:linear-gradient(#e3ad70 0%,#d9944a 25%,#cc7714 50%,#c96d0c 60%,#e48a24 80%,#ffa940 100%);"></div>
<span style="left:958.00px;letter-spacing:0.685px;top:223.50px;font-size:13px;color:#000;line-height:16px;white-space:pre;">00:00.069</span>
<span style="left:1080.30px;letter-spacing:0.770px;top:223.50px;font-size:13px;color:#000;line-height:16px;white-space:pre;">1</span>
<span style="left:1139.30px;letter-spacing:0.770px;top:223.50px;font-size:13px;color:#000;line-height:16px;white-space:pre;">0</span>
<svg style="left:1166px;top:226px" width="12" height="11"><use href="#i-check"/></svg>
<span style="left:538.00px;letter-spacing:-0.389px;top:239.50px;font-size:13px;color:#000;line-height:16px;white-space:pre;">Cross</span><span style="left:574.00px;letter-spacing:0.150px;top:239.50px;font-size:13px;color:#000;line-height:16px;white-space:pre;">Site</span><span style="left:601.00px;letter-spacing:0.491px;top:239.50px;font-size:13px;color:#000;line-height:16px;white-space:pre;">Scripting</span><span style="left:660.00px;letter-spacing:0.365px;top:239.50px;font-size:13px;color:#000;line-height:16px;white-space:pre;">(persistente)</span><span style="left:741.00px;letter-spacing:-0.329px;top:239.50px;font-size:13px;color:#000;line-height:16px;white-space:pre;">-</span><span style="left:749.00px;letter-spacing:0.396px;top:239.50px;font-size:13px;color:#000;line-height:16px;white-space:pre;">rag...</span>
<span style="left:793.00px;letter-spacing:-0.081px;top:239.50px;font-size:13px;color:#000;line-height:16px;white-space:pre;">Medio</span>
<div style="left:869px;top:240px;width:78px;height:14px;border:1px solid rgba(125,110,95,.5);border-radius:1.5px;"></div>
<div style="left:870px;top:241px;width:76px;height:12px;border:1px solid #b25c0c;border-top-color:#a4500a;border-bottom-color:#74260a;background:linear-gradient(#e3ad70 0%,#d9944a 25%,#cc7714 50%,#c96d0c 60%,#e48a24 80%,#ffa940 100%);"></div>
<span style="left:958.00px;letter-spacing:0.685px;top:239.50px;font-size:13px;color:#000;line-height:16px;white-space:pre;">00:00.074</span>
<span style="left:1080.30px;letter-spacing:0.770px;top:239.50px;font-size:13px;color:#000;line-height:16px;white-space:pre;">1</span>
<span style="left:1139.30px;letter-spacing:0.770px;top:239.50px;font-size:13px;color:#000;line-height:16px;white-space:pre;">0</span>
<svg style="left:1166px;top:242px" width="12" height="11"><use href="#i-check"/></svg>
<span style="left:538.00px;letter-spacing:-0.389px;top:255.50px;font-size:13px;color:#000;line-height:16px;white-space:pre;">Cross</span><span style="left:574.00px;letter-spacing:0.150px;top:255.50px;font-size:13px;color:#000;line-height:16px;white-space:pre;">Site</span><span style="left:601.00px;letter-spacing:0.491px;top:255.50px;font-size:13px;color:#000;line-height:16px;white-space:pre;">Scripting</span><span style="left:660.00px;letter-spacing:0.365px;top:255.50px;font-size:13px;color:#000;line-height:16px;white-space:pre;">(persistente)</span>
<span style="left:793.00px;letter-spacing:-0.081px;top:255.50px;font-size:13px;color:#000;line-height:16px;white-space:pre;">Medio</span>
<div style="left:869px;top:256px;width:78px;height:14px;border:1px solid rgba(125,110,95,.5);border-radius:1.5px;"></div>
<div style="left:870px;top:257px;width:76px;height:12px;border:1px solid #b25c0c;border-top-color:#a4500a;border-bottom-color:#74260a;background:linear-gradient(#e3ad70 0%,#d9944a 25%,#cc7714 50%,#c96d0c 60%,#e48a24 80%,#ffa940 100%);"></div>
<span style="left:958.00px;letter-spacing:0.685px;top:255.50px;font-size:13px;color:#000;line-height:16px;white-space:pre;">00:00.005</span>
<span style="left:1080.30px;letter-spacing:0.770px;top:255.50px;font-size:13px;color:#000;line-height:16px;white-space:pre;">0</span>
<span style="left:1139.30px;letter-spacing:0.770px;top:255.50px;font-size:13px;color:#000;line-height:16px;white-space:pre;">0</span>
<svg style="left:1166px;top:258px" width="12" height="11"><use href="#i-check"/></svg>
<span style="left:538.00px;letter-spacing:-0.671px;top:271.50px;font-size:13px;color:#000;line-height:16px;white-space:pre;">SQL</span><span style="left:566.00px;letter-spacing:0.398px;top:271.50px;font-size:13px;color:#000;line-height:16px;white-space:pre;">Injection</span>
<span style="left:793.00px;letter-spacing:-0.081px;top:271.50px;font-size:13px;color:#000;line-height:16px;white-space:pre;">Medio</span>
<div style="left:869px;top:272px;width:78px;height:14px;border:1px solid rgba(125,110,95,.5);border-radius:1.5px;"></div>
<div style="left:870px;top:273px;width:76px;height:12px;border:1px solid #b25c0c;border-top-color:#a4500a;border-bottom-color:#74260a;background:linear-gradient(#e3ad70 0%,#d9944a 25%,#cc7714 50%,#c96d0c 60%,#e48a24 80%,#ffa940 100%);"></div>
<span style="left:958.00px;letter-spacing:0.685px;top:271.50px;font-size:13px;color:#000;line-height:16px;white-space:pre;">00:01.696</span>
<span style="left:1072.30px;letter-spacing:0.770px;top:271.50px;font-size:13px;color:#000;line-height:16px;white-space:pre;">22</span>
<span style="left:1139.30px;letter-spacing:0.770px;top:271.50px;font-size:13px;color:#000;line-height:16px;white-space:pre;">0</span>
<svg style="left:1166px;top:274px" width="12" height="11"><use href="#i-check"/></svg>
<span style="left:538.00px;letter-spacing:0.107px;top:287.50px;font-size:13px;color:#000;line-height:16px;white-space:pre;">Iniezione</span><span style="left:595.00px;letter-spacing:0.441px;top:287.50px;font-size:13px;color:#000;line-height:16px;white-space:pre;">di</span><span style="left:610.00px;letter-spacing:0.237px;top:287.50px;font-size:13px;color:#000;line-height:16px;white-space:pre;">codice</span><span style="left:653.00px;letter-spacing:0.260px;top:287.50px;font-size:13px;color:#000;line-height:16px;white-space:pre;">lato</span><span style="left:679.00px;letter-spacing:0.147px;top:287.50px;font-size:13px;color:#000;line-height:16px;white-space:pre;">server</span>
<span style="left:793.00px;letter-spacing:-0.081px;top:287.50px;font-size:13px;color:#000;line-height:16px;white-space:pre;">Medio</span>
<div style="left:869px;top:288px;width:78px;height:14px;border:1px solid rgba(125,110,95,.5);border-radius:1.5px;"></div>
<div style="left:870px;top:289px;width:76px;height:12px;border:1px solid #b25c0c;border-top-color:#a4500a;border-bottom-color:#74260a;background:linear-gradient(#e3ad70 0%,#d9944a 25%,#cc7714 50%,#c96d0c 60%,#e48a24 80%,#ffa940 100%);"></div>
<span style="left:958.00px;letter-spacing:0.685px;top:287.50px;font-size:13px;color:#000;line-height:16px;white-space:pre;">00:00.634</span>
<span style="left:1080.30px;letter-spacing:0.770px;top:287.50px;font-size:13px;color:#000;line-height:16px;white-space:pre;">8</span>
<span style="left:1139.30px;letter-spacing:0.770px;top:287.50px;font-size:13px;color:#000;line-height:16px;white-space:pre;">0</span>
<svg style="left:1166px;top:290px" width="12" height="11"><use href="#i-check"/></svg>
<span style="left:538.00px;letter-spacing:0.107px;top:303.50px;font-size:13px;color:#000;line-height:16px;white-space:pre;">Iniezione</span><span style="left:595.00px;letter-spacing:0.441px;top:303.50px;font-size:13px;color:#000;line-height:16px;white-space:pre;">di</span><span style="left:610.00px;letter-spacing:0.360px;top:303.50px;font-size:13px;color:#000;line-height:16px;white-space:pre;">comando</span><span style="left:670.00px;letter-spacing:-0.059px;top:303.50px;font-size:13px;color:#000;line-height:16px;white-space:pre;">al</span><span style="left:684.00px;letter-spacing:0.173px;top:303.50px;font-size:13px;color:#000;line-height:16px;white-space:pre;">sistema</span><span style="left:734.00px;letter-spacing:0.239px;top:303.50px;font-size:13px;color:#000;line-height:16px;white-space:pre;">opera...</span>
<span style="left:793.00px;letter-spacing:-0.081px;top:303.50px;font-size:13px;color:#000;line-height:16px;white-space:pre;">Medio</span>
<div style="left:869px;top:304px;width:78px;height:14px;border:1px solid rgba(125,110,95,.5);border-radius:1.5px;"></div>
<div style="left:870px;top:305px;width:76px;height:12px;border:1px solid #b25c0c;border-top-color:#a4500a;border-bottom-color:#74260a;background:linear-gradient(#e3ad70 0%,#d9944a 25%,#cc7714 50%,#c96d0c 60%,#e48a24 80%,#ffa940 100%);"></div>
<span style="left:958.00px;letter-spacing:0.685px;top:303.50px;font-size:13px;color:#000;line-height:16px;white-space:pre;">00:02.476</span>
<span style="left:1072.30px;letter-spacing:0.770px;top:303.50px;font-size:13px;color:#000;line-height:16px;white-space:pre;">32</span>
<span style="left:1139.30px;letter-spacing:0.770px;top:303.50px;font-size:13px;color:#000;line-height:16px;white-space:pre;">0</span>
<svg style="left:1166px;top:306px" width="12" height="11"><use href="#i-check"/></svg>
<span style="left:538.00px;letter-spacing:0.041px;top:319.50px;font-size:13px;color:#000;line-height:16px;white-space:pre;">Navigazione</span><span style="left:614.00px;letter-spacing:0.107px;top:319.50px;font-size:13px;color:#000;line-height:16px;white-space:pre;">delle</span><span style="left:646.00px;letter-spacing:0.461px;top:319.50px;font-size:13px;color:#000;line-height:16px;white-space:pre;">directory</span>
<span style="left:793.00px;letter-spacing:-0.081px;top:319.50px;font-size:13px;color:#000;line-height:16px;white-space:pre;">Medio</span>
<div style="left:869px;top:320px;width:78px;height:14px;border:1px solid rgba(125,110,95,.5);border-radius:1.5px;"></div>
<div style="left:870px;top:321px;width:76px;height:12px;border:1px solid #b25c0c;border-top-color:#a4500a;border-bottom-color:#74260a;background:linear-gradient(#e3ad70 0%,#d9944a 25%,#cc7714 50%,#c96d0c 60%,#e48a24 80%,#ffa940 100%);"></div>
<span style="left:958.00px;letter-spacing:0.685px;top:319.50px;font-size:13px;color:#000;line-height:16px;white-space:pre;">00:00.070</span>
<span style="left:1080.30px;letter-spacing:0.770px;top:319.50px;font-size:13px;color:#000;line-height:16px;white-space:pre;">1</span>
<span style="left:1139.30px;letter-spacing:0.770px;top:319.50px;font-size:13px;color:#000;line-height:16px;white-space:pre;">0</span>
<svg style="left:1166px;top:322px" width="12" height="11"><use href="#i-check"/></svg>
<span style="left:538.00px;letter-spacing:-0.034px;top:335.50px;font-size:13px;color:#000;line-height:16px;white-space:pre;">Redirezione</span><span style="left:611.00px;letter-spacing:0.234px;top:335.50px;font-size:13px;color:#000;line-height:16px;white-space:pre;">esterna</span>
<span style="left:793.00px;letter-spacing:-0.081px;top:335.50px;font-size:13px;color:#000;line-height:16px;white-space:pre;">Medio</span>
<div style="left:869px;top:336px;width:78px;height:14px;border:1px solid rgba(125,110,95,.5);border-radius:1.5px;"></div>
<div style="left:870px;top:337px;width:76px;height:12px;border:1px solid #b25c0c;border-top-color:#a4500a;border-bottom-color:#74260a;background:linear-gradient(#e3ad70 0%,#d9944a 25%,#cc7714 50%,#c96d0c 60%,#e48a24 80%,#ffa940 100%);"></div>
<span style="left:958.00px;letter-spacing:0.685px;top:335.50px;font-size:13px;color:#000;line-height:16px;white-space:pre;">00:00.669</span>
<span style="left:1080.30px;letter-spacing:0.770px;top:335.50px;font-size:13px;color:#000;line-height:16px;white-space:pre;">9</span>
<span style="left:1139.30px;letter-spacing:0.770px;top:335.50px;font-size:13px;color:#000;line-height:16px;white-space:pre;">0</span>
<svg style="left:1166px;top:338px" width="12" height="11"><use href="#i-check"/></svg>
<span style="left:538.00px;letter-spacing:0.259px;top:351.50px;font-size:13px;color:#000;line-height:16px;white-space:pre;">Buffer</span><span style="left:578.00px;letter-spacing:0.089px;top:351.50px;font-size:13px;color:#000;line-height:16px;white-space:pre;">Overflow</span>
<span style="left:793.00px;letter-spacing:-0.081px;top:351.50px;font-size:13px;color:#000;line-height:16px;white-space:pre;">Medio</span>
<div style="left:869px;top:352px;width:78px;height:14px;border:1px solid rgba(125,110,95,.5);border-radius:1.5px;"></div>
<div style="left:870px;top:353px;width:76px;height:12px;border:1px solid #b25c0c;border-top-color:#a4500a;border-bottom-color:#74260a;background:linear-gradient(#e3ad70 0%,#d9944a 25%,#cc7714 50%,#c96d0c 60%,#e48a24 80%,#ffa940 100%);"></div>
<span style="left:958.00px;letter-spacing:0.685px;top:351.50px;font-size:13px;color:#000;line-height:16px;white-space:pre;">00:00.122</span>
<span style="left:1080.30px;letter-spacing:0.770px;top:351.50px;font-size:13px;color:#000;line-height:16px;white-space:pre;">1</span>
<span style="left:1139.30px;letter-spacing:0.770px;top:351.50px;font-size:13px;color:#000;line-height:16px;white-space:pre;">0</span>
<svg style="left:1166px;top:354px" width="12" height="11"><use href="#i-check"/></svg>
<span style="left:538.00px;letter-spacing:0.147px;top:367.50px;font-size:13px;color:#000;line-height:16px;white-space:pre;">Errore</span><span style="left:579.00px;letter-spacing:0.107px;top:367.50px;font-size:13px;color:#000;line-height:16px;white-space:pre;">nella</span><span style="left:611.00px;letter-spacing:0.326px;top:367.50px;font-size:13px;color:#000;line-height:16px;white-space:pre;">formattazione</span><span style="left:698.00px;letter-spacing:0.107px;top:367.50px;font-size:13px;color:#000;line-height:16px;white-space:pre;">della</span><span style="left:730.00px;letter-spacing:0.426px;top:367.50px;font-size:13px;color:#000;line-height:16px;white-space:pre;">stringa</span>
<span style="left:793.00px;letter-spacing:-0.081px;top:367.50px;font-size:13px;color:#000;line-height:16px;white-space:pre;">Medio</span>
<div style="left:869px;top:368px;width:78px;height:14px;border:1px solid rgba(125,110,95,.5);border-radius:1.5px;"></div>
<div style="left:870px;top:369px;width:76px;height:12px;border:1px solid #b25c0c;border-top-color:#a4500a;border-bottom-color:#74260a;background:linear-gradient(#e3ad70 0%,#d9944a 25%,#cc7714 50%,#c96d0c 60%,#e48a24 80%,#ffa940 100%);"></div>
<span style="left:958.00px;letter-spacing:0.685px;top:367.50px;font-size:13px;color:#000;line-height:16px;white-space:pre;">00:00.225</span>
<span style="left:1080.30px;letter-spacing:0.770px;top:367.50px;font-size:13px;color:#000;line-height:16px;white-space:pre;">3</span>
<span style="left:1139.30px;letter-spacing:0.770px;top:367.50px;font-size:13px;color:#000;line-height:16px;white-space:pre;">0</span>
<svg style="left:1166px;top:370px" width="12" height="11"><use href="#i-check"/></svg>
<span style="left:538.00px;letter-spacing:0.107px;top:383.50px;font-size:13px;color:#000;line-height:16px;white-space:pre;">Iniezione</span><span style="left:595.00px;letter-spacing:-0.987px;top:383.50px;font-size:13px;color:#000;line-height:16px;white-space:pre;">CRLF</span>
<span style="left:793.00px;letter-spacing:-0.081px;top:383.50px;font-size:13px;color:#000;line-height:16px;white-space:pre;">Medio</span>
<div style="left:869px;top:384px;width:78px;height:14px;border:1px solid rgba(125,110,95,.5);border-radius:1.5px;"></div>
<div style="left:870px;top:385px;width:76px;height:12px;border:1px solid #b25c0c;border-top-color:#a4500a;border-bottom-color:#74260a;background:linear-gradient(#e3ad70 0%,#d9944a 25%,#cc7714 50%,#c96d0c 60%,#e48a24 80%,#ffa940 100%);"></div>
<span style="left:958.00px;letter-spacing:0.685px;top:383.50px;font-size:13px;color:#000;line-height:16px;white-space:pre;">00:00.492</span>
<span style="left:1080.30px;letter-spacing:0.770px;top:383.50px;font-size:13px;color:#000;line-height:16px;white-space:pre;">7</span>
<span style="left:1139.30px;letter-spacing:0.770px;top:383.50px;font-size:13px;color:#000;line-height:16px;white-space:pre;">0</span>
<svg style="left:1166px;top:386px" width="12" height="11"><use href="#i-check"/></svg>
<span style="left:538.00px;letter-spacing:0.015px;top:399.50px;font-size:13px;color:#000;line-height:16px;white-space:pre;">Manomissione</span><span style="left:626.00px;letter-spacing:0.217px;top:399.50px;font-size:13px;color:#000;line-height:16px;white-space:pre;">del</span><span style="left:648.00px;letter-spacing:0.417px;top:399.50px;font-size:13px;color:#000;line-height:16px;white-space:pre;">parametro</span>
<span style="left:793.00px;letter-spacing:-0.081px;top:399.50px;font-size:13px;color:#000;line-height:16px;white-space:pre;">Medio</span>
<div style="left:869px;top:400px;width:78px;height:14px;border:1px solid rgba(125,110,95,.5);border-radius:1.5px;"></div>
<div style="left:870px;top:401px;width:76px;height:12px;border:1px solid #b25c0c;border-top-color:#a4500a;border-bottom-color:#74260a;background:linear-gradient(#e3ad70 0%,#d9944a 25%,#cc7714 50%,#c96d0c 60%,#e48a24 80%,#ffa940 100%);"></div>
<span style="left:958.00px;letter-spacing:0.685px;top:399.50px;font-size:13px;color:#000;line-height:16px;white-space:pre;">00:00.282</span>
<span style="left:1080.30px;letter-spacing:0.770px;top:399.50px;font-size:13px;color:#000;line-height:16px;white-space:pre;">4</span>
<span style="left:1139.30px;letter-spacing:0.770px;top:399.50px;font-size:13px;color:#000;line-height:16px;white-space:pre;">0</span>
<svg style="left:1167px;top:403px" width="11" height="9"><use href="#i-pp"/></svg>
<span style="left:538.00px;letter-spacing:0.462px;top:415.50px;font-size:13px;color:#000;line-height:16px;white-space:pre;">Script</span><span style="left:578.00px;letter-spacing:0.404px;top:415.50px;font-size:13px;color:#000;line-height:16px;white-space:pre;">per</span><span style="left:602.00px;letter-spacing:-0.059px;top:415.50px;font-size:13px;color:#000;line-height:16px;white-space:pre;">le</span><span style="left:616.00px;letter-spacing:0.144px;top:415.50px;font-size:13px;color:#000;line-height:16px;white-space:pre;">regole</span><span style="left:657.00px;letter-spacing:0.441px;top:415.50px;font-size:13px;color:#000;line-height:16px;white-space:pre;">di</span><span style="left:672.00px;letter-spacing:0.051px;top:415.50px;font-size:13px;color:#000;line-height:16px;white-space:pre;">scansione</span><span style="left:735.00px;letter-spacing:0.488px;top:415.50px;font-size:13px;color:#000;line-height:16px;white-space:pre;">attiva</span>
<span style="left:793.00px;letter-spacing:-0.081px;top:415.50px;font-size:13px;color:#000;line-height:16px;white-space:pre;">Medio</span>
<span style="left:1080.30px;letter-spacing:0.770px;top:415.50px;font-size:13px;color:#000;line-height:16px;white-space:pre;">0</span>
<span style="left:1139.30px;letter-spacing:0.770px;top:415.50px;font-size:13px;color:#000;line-height:16px;white-space:pre;">0</span>
<svg style="left:1167px;top:419px" width="12" height="9"><use href="#i-ff"/></svg>
<span style="left:538.00px;letter-spacing:0.131px;top:431.50px;font-size:13px;color:#000;line-height:16px;white-space:pre;">Divulgazione</span><span style="left:618.00px;letter-spacing:0.441px;top:431.50px;font-size:13px;color:#000;line-height:16px;white-space:pre;">di</span><span style="left:633.00px;letter-spacing:0.237px;top:431.50px;font-size:13px;color:#000;line-height:16px;white-space:pre;">codice</span><span style="left:676.00px;letter-spacing:0.301px;top:431.50px;font-size:13px;color:#000;line-height:16px;white-space:pre;">sorgente</span><span style="left:733.00px;letter-spacing:-0.329px;top:431.50px;font-size:13px;color:#000;line-height:16px;white-space:pre;">-</span><span style="left:741.00px;letter-spacing:-0.577px;top:431.50px;font-size:13px;color:#000;line-height:16px;white-space:pre;">SVN</span>
<span style="left:793.00px;letter-spacing:-0.081px;top:431.50px;font-size:13px;color:#000;line-height:16px;white-space:pre;">Medio</span>
<span style="left:1080.30px;letter-spacing:0.770px;top:431.50px;font-size:13px;color:#000;line-height:16px;white-space:pre;">0</span>
<span style="left:1139.30px;letter-spacing:0.770px;top:431.50px;font-size:13px;color:#000;line-height:16px;white-space:pre;">0</span>
<svg style="left:1167px;top:435px" width="12" height="9"><use href="#i-ff"/></svg>
<span style="left:538.00px;letter-spacing:0.131px;top:447.50px;font-size:13px;color:#000;line-height:16px;white-space:pre;">Divulgazione</span><span style="left:618.00px;letter-spacing:0.441px;top:447.50px;font-size:13px;color:#000;line-height:16px;white-space:pre;">di</span><span style="left:633.00px;letter-spacing:0.237px;top:447.50px;font-size:13px;color:#000;line-height:16px;white-space:pre;">codice</span><span style="left:676.00px;letter-spacing:0.301px;top:447.50px;font-size:13px;color:#000;line-height:16px;white-space:pre;">sorgente</span><span style="left:733.00px;letter-spacing:-0.329px;top:447.50px;font-size:13px;color:#000;line-height:16px;white-space:pre;">-</span><span style="left:741.00px;letter-spacing:0.499px;top:447.50px;font-size:13px;color:#000;line-height:16px;white-space:pre;">cart...</span>
<span style="left:793.00px;letter-spacing:-0.081px;top:447.50px;font-size:13px;color:#000;line-height:16px;white-space:pre;">Medio</span>
<span style="left:1080.30px;letter-spacing:0.770px;top:447.50px;font-size:13px;color:#000;line-height:16px;white-space:pre;">0</span>
<span style="left:1139.30px;letter-spacing:0.770px;top:447.50px;font-size:13px;color:#000;line-height:16px;white-space:pre;">0</span>
<svg style="left:1167px;top:451px" width="12" height="9"><use href="#i-ff"/></svg>
<span style="left:538.00px;letter-spacing:-0.021px;top:463.50px;font-size:13px;color:#000;line-height:16px;white-space:pre;">Esecuzione</span><span style="left:609.00px;letter-spacing:0.441px;top:463.50px;font-size:13px;color:#000;line-height:16px;white-space:pre;">di</span><span style="left:624.00px;letter-spacing:0.237px;top:463.50px;font-size:13px;color:#000;line-height:16px;white-space:pre;">codice</span><span style="left:667.00px;letter-spacing:0.423px;top:463.50px;font-size:13px;color:#000;line-height:16px;white-space:pre;">remoto</span><span style="left:714.00px;letter-spacing:-0.329px;top:463.50px;font-size:13px;color:#000;line-height:16px;white-space:pre;">-</span><span style="left:722.00px;letter-spacing:0.019px;top:463.50px;font-size:13px;color:#000;line-height:16px;white-space:pre;">Shell</span><span style="left:755.00px;letter-spacing:0.253px;top:463.50px;font-size:13px;color:#000;line-height:16px;white-space:pre;">Sh...</span>
<span style="left:793.00px;letter-spacing:-0.081px;top:463.50px;font-size:13px;color:#000;line-height:16px;white-space:pre;">Medio</span>
<span style="left:1080.30px;letter-spacing:0.770px;top:463.50px;font-size:13px;color:#000;line-height:16px;white-space:pre;">0</span>
<span style="left:1139.30px;letter-spacing:0.770px;top:463.50px;font-size:13px;color:#000;line-height:16px;white-space:pre;">0</span>
<svg style="left:1167px;top:467px" width="12" height="9"><use href="#i-ff"/></svg>
<span style="left:538.00px;letter-spacing:0.226px;top:479.50px;font-size:13px;color:#000;line-height:16px;white-space:pre;">Scanner</span><span style="left:592.00px;letter-spacing:0.391px;top:479.50px;font-size:13px;color:#000;line-height:16px;white-space:pre;">anti-token</span><span style="left:657.00px;letter-spacing:-1.097px;top:479.50px;font-size:13px;color:#000;line-height:16px;white-space:pre;">CSRF</span>
<span style="left:793.00px;letter-spacing:-0.081px;top:479.50px;font-size:13px;color:#000;line-height:16px;white-space:pre;">Medio</span>
<span style="left:1080.30px;letter-spacing:0.770px;top:479.50px;font-size:13px;color:#000;line-height:16px;white-space:pre;">0</span>
<span style="left:1139.30px;letter-spacing:0.770px;top:479.50px;font-size:13px;color:#000;line-height:16px;white-space:pre;">0</span>
<svg style="left:1167px;top:483px" width="12" height="9"><use href="#i-ff"/></svg>
<span style="left:538.00px;letter-spacing:0.303px;top:495.50px;font-size:13px;color:#000;line-height:16px;white-space:pre;">Vulnerabilità</span><span style="left:617.00px;letter-spacing:-0.196px;top:495.50px;font-size:13px;color:#000;line-height:16px;white-space:pre;">OpenSSL</span><span style="left:676.00px;letter-spacing:0.240px;top:495.50px;font-size:13px;color:#000;line-height:16px;white-space:pre;">Heartbleed</span>
<span style="left:793.00px;letter-spacing:-0.081px;top:495.50px;font-size:13px;color:#000;line-height:16px;white-space:pre;">Medio</span>
<span style="left:1080.30px;letter-spacing:0.770px;top:495.50px;font-size:13px;color:#000;line-height:16px;white-space:pre;">0</span>
<span style="left:1139.30px;letter-spacing:0.770px;top:495.50px;font-size:13px;color:#000;line-height:16px;white-space:pre;">0</span>
<svg style="left:1167px;top:499px" width="12" height="9"><use href="#i-ff"/></svg>
<div style="left:1192px;top:111px;width:15px;height:400px;background:linear-gradient(90deg,#b3b6be 0%,#c3c6cd 35%,#d9dbe1 100%);"></div>
<div style="left:1192px;top:111px;width:15px;height:29px;background:linear-gradient(90deg,#d6d8dd,#e8e9ec 40%,#e2e4e8);"></div>
<svg style="left:1196px;top:116px" width="7" height="7" viewBox="0 0 7 7"><path d="M3.5 0L7 7H0Z" fill="#3a3a3a"/></svg>
<svg style="left:1192px;top:484px" width="15" height="10" viewBox="0 0 15 10"><defs><linearGradient id="capt1192_111" x1="0" y1="0" x2="1" y2="0"><stop offset="0" stop-color="#b3b6be"/><stop offset=".35" stop-color="#c3c6cd"/><stop offset="1" stop-color="#d9dbe1"/></linearGradient><linearGradient id="cap1192_111" x1="0" y1="0" x2="0" y2="1"><stop offset="0" stop-color="#000" stop-opacity="0"/><stop offset=".35" stop-color="#000" stop-opacity=".08"/><stop offset=".7" stop-color="#000" stop-opacity=".35"/><stop offset="1" stop-color="#000" stop-opacity=".72"/></linearGradient></defs><rect width="15" height="10" fill="#e4e5e9"/><path d="M0 0H15Q15 9 3 10H0Z" fill="url(#capt1192_111)"/><path d="M0 0H15Q15 9 3 10H0Z" fill="url(#cap1192_111)"/></svg>
<div style="left:1192px;top:494px;width:15px;height:17px;background:linear-gradient(90deg,#d6d8dd,#e8e9ec 40%,#e2e4e8);"></div>
<svg style="left:1196px;top:499px" width="7" height="7" viewBox="0 0 7 7"><path d="M0 0H7L3.5 7Z" fill="#3a3a3a"/></svg>
<svg style="left:1192px;top:128px" width="15" height="138" viewBox="0 0 15 138"><defs><linearGradient id="th1192_111" x1="0" y1="0" x2="1" y2="0"><stop offset="0" stop-color="#b5c3d1"/><stop offset=".09" stop-color="#eef3f7"/><stop offset=".3" stop-color="#aac1da"/><stop offset=".6" stop-color="#c9dcec"/><stop offset=".92" stop-color="#e9f7fd"/><stop offset="1" stop-color="#e9f7fd"/></linearGradient></defs><path d="M0 0H2Q14 1 14 13V125Q14 137 2 138H0Z" fill="url(#th1192_111)"/><path d="M0 0.5H2Q13.5 1.5 13.5 13V125Q13.5 136.5 2 137.5H0" fill="none" stroke="#2e4766" stroke-width="1"/></svg>
<div style="left:1207px;top:90px;width:1px;height:420px;background:#9297a1;"></div>
<svg style="left:6px;top:9px" width="16" height="16"><use href="#i-target"/></svg>
<svg style="left:30px;top:10px" width="17" height="16"><use href="#i-winadd"/></svg>
<svg style="left:54px;top:10px" width="16" height="14"><use href="#i-winin"/></svg>
<svg style="left:78px;top:10px" width="16" height="14"><use href="#i-winout"/></svg>
<svg style="left:9px;top:42px" width="8" height="8"><use href="#i-dn"/></svg>
<svg style="left:21px;top:38px" width="16" height="15"><use href="#i-ctxs"/></svg>
<svg style="left:37px;top:58px" width="16" height="14"><use href="#i-ctx"/></svg>
<svg style="left:9px;top:82px" width="8" height="8"><use href="#i-dn"/></svg>
<svg style="left:26px;top:78px" width="14" height="14"><use href="#i-globe"/></svg>
<svg style="left:25px;top:104px" width="8" height="8"><use href="#i-dn"/></svg>
<svg style="left:41px;top:100px" width="16" height="13"><use href="#i-folderopen"/></svg>
<svg style="left:61px;top:102px" width="11" height="11"><use href="#i-flago"/></svg>
<svg style="left:41px;top:126px" width="8" height="8"><use href="#i-rt"/></svg>
<svg style="left:57px;top:122px" width="16" height="13"><use href="#i-folder"/></svg>
<svg style="left:59px;top:144px" width="12" height="15"><use href="#i-doc"/></svg>
<svg style="left:77px;top:146px" width="11" height="11"><use href="#i-flago"/></svg>
<svg style="left:59px;top:166px" width="12" height="15"><use href="#i-doc"/></svg>
<svg style="left:77px;top:168px" width="11" height="11"><use href="#i-flagy"/></svg>
<svg style="left:59px;top:188px" width="12" height="15"><use href="#i-doc"/></svg>
<svg style="left:77px;top:190px" width="11" height="11"><use href="#i-flago"/></svg>
<svg style="left:19px;top:357px" width="14" height="16"><use href="#i-cal"/></svg>
<svg style="left:116px;top:357px" width="16" height="16"><use href="#i-mag"/></svg>
<svg style="left:197px;top:357px" width="16" height="16"><use href="#i-flagr"/></svg>
<svg style="left:256px;top:360px" width="10" height="10"><use href="#i-pin"/></svg>
<svg style="left:283px;top:357px" width="12" height="15"><use href="#i-doclines"/></svg>
<svg style="left:362px;top:358px" width="12" height="14"><use href="#i-flame"/></svg>
<svg style="left:496px;top:358px" width="14" height="14"><use href="#i-plus"/></svg>
<svg style="left:5px;top:386px" width="16" height="16"><use href="#i-target"/></svg>
<svg style="left:30px;top:387px" width="14" height="14"><use href="#i-globeg"/></svg>
<div style="left:54px;top:384px;width:1px;height:20px;background:repeating-linear-gradient(#9a9ea6 0 1px,transparent 1px 3px);"></div>
<svg style="left:62px;top:386px" width="18" height="16"><use href="#i-pencil"/></svg>
<svg style="left:8px;top:415px" width="8" height="8"><use href="#i-dn"/></svg>
<svg style="left:20px;top:412px" width="16" height="13"><use href="#i-folderopen"/></svg>
<svg style="left:24px;top:434px" width="8" height="8"><use href="#i-rt"/></svg>
<svg style="left:36px;top:432px" width="11" height="11"><use href="#i-flago"/></svg>
<svg style="left:24px;top:452px" width="8" height="8"><use href="#i-rt"/></svg>
<svg style="left:36px;top:450px" width="11" height="11"><use href="#i-flago"/></svg>
<svg style="left:24px;top:470px" width="8" height="8"><use href="#i-rt"/></svg>
<svg style="left:36px;top:468px" width="11" height="11"><use href="#i-flagy"/></svg>
<svg style="left:24px;top:488px" width="8" height="8"><use href="#i-rt"/></svg>
<svg style="left:36px;top:486px" width="11" height="11"><use href="#i-flagy"/></svg>
</div>
</body></html>
